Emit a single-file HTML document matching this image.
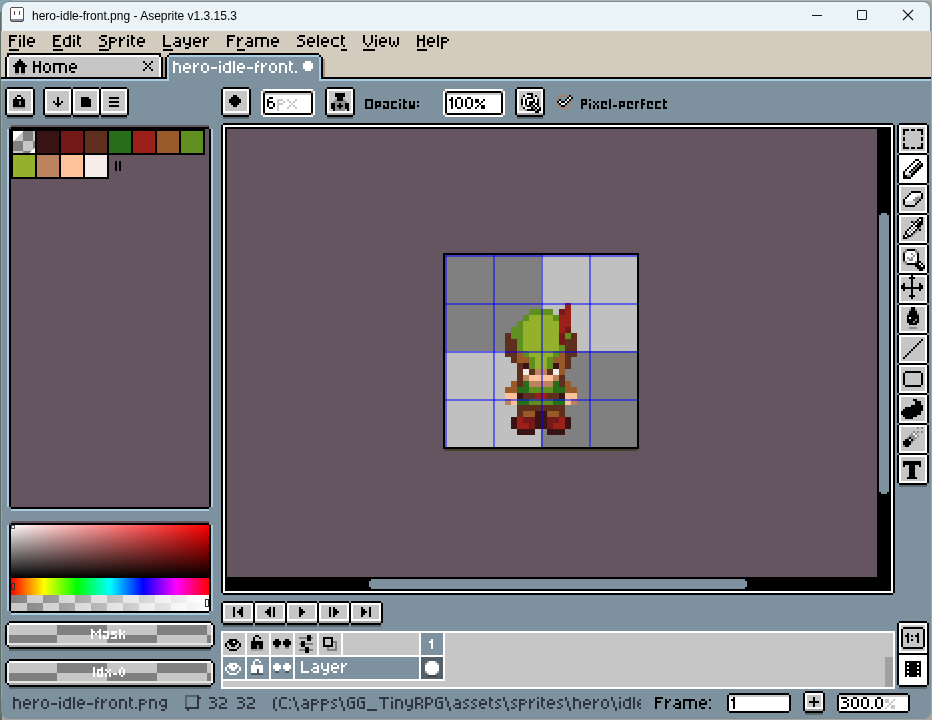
<!DOCTYPE html>
<html><head><meta charset="utf-8"><style>
html,body{margin:0;padding:0;width:932px;height:720px;overflow:hidden;background:#62797f;}
#w{position:relative;width:932px;height:720px;overflow:hidden;}
#w div,#w span,#w svg{position:absolute;display:block;}
#w span{white-space:nowrap;-webkit-font-smoothing:antialiased;will-change:transform;}
</style></head><body><div id="w">
<div style="left:0px;top:0px;width:932px;height:720px;background:#a9a5a2;"></div>
<div style="left:0px;top:0px;width:2px;height:720px;background:#5f6f68;"></div>
<div style="left:0px;top:0px;width:932px;height:1px;background:#a9b2b6;"></div>
<div style="left:0px;top:0px;width:12px;height:12px;background:#86a6b4;"></div>
<div style="left:1px;top:1px;width:930px;height:718px;background:#7b8f99;border-radius:8px;"></div>
<div style="left:2px;top:2px;width:928px;height:716px;background:#7d929e;border-radius:7px;"></div>
<div style="left:1px;top:40px;width:1px;height:660px;background:#8fa3ad;"></div>
<div style="left:2px;top:2px;width:928px;height:29px;background:#eaf3f6;border-radius:7px 7px 0 0;"></div>
<div style="left:11px;top:7px;width:12px;height:15px;background:#5d4a55;"></div>
<div style="left:10px;top:8px;width:14px;height:13px;background:#5d4a55;"></div>
<div style="left:11px;top:8px;width:12px;height:13px;background:#fff;"></div>
<div style="left:11px;top:19px;width:12px;height:2px;background:#7d929e;"></div>
<div style="left:14px;top:11px;width:1px;height:4px;background:#5d4a55;"></div>
<div style="left:19px;top:11px;width:1px;height:4px;background:#5d4a55;"></div>
<span style="left:32px;top:9.84px;font:normal 12px/12px 'Liberation Sans',sans-serif;color:#000;letter-spacing:0.005px;">hero-idle-front.png - Aseprite v1.3.15.3</span>
<div style="left:812px;top:15px;width:10px;height:1px;background:#1a1a1a;"></div>
<div style="left:857px;top:10px;width:10px;height:10px;background:transparent;box-sizing:border-box;border:1px solid #1a1a1a;border-radius:1px;"></div>
<svg style="left:902px;top:9px" width="12" height="12"><path d="M1 1L11 11M11 1L1 11" stroke="#1a1a1a" stroke-width="1.1"/></svg>
<div style="left:1px;top:31px;width:930px;height:50px;background:#d3cbbe;"></div>
<svg style="left:9px;top:35px;" width="28" height="14" viewBox="0 0 28 14" shape-rendering="crispEdges"><path d="M0 0h8v2h-8zM0 2h2v2h-2zM0 4h6v2h-6zM0 6h2v2h-2zM0 8h2v2h-2zM0 10h2v2h-2zM10 0h2v2h-2zM10 4h2v2h-2zM10 6h2v2h-2zM10 8h2v2h-2zM10 10h2v2h-2zM14 0h2v2h-2zM14 2h2v2h-2zM14 4h2v2h-2zM14 6h2v2h-2zM14 8h2v2h-2zM14 10h2v2h-2zM20 2h4v2h-4zM18 4h2v2h-2zM24 4h2v2h-2zM18 6h8v2h-8zM18 8h2v2h-2zM20 10h4v2h-4z" fill="#000"/></svg>
<svg style="left:53px;top:35px;" width="30" height="14" viewBox="0 0 30 14" shape-rendering="crispEdges"><path d="M0 0h8v2h-8zM0 2h2v2h-2zM0 4h6v2h-6zM0 6h2v2h-2zM0 8h2v2h-2zM0 10h8v2h-8zM16 0h2v2h-2zM12 2h6v2h-6zM10 4h2v2h-2zM16 4h2v2h-2zM10 6h2v2h-2zM16 6h2v2h-2zM10 8h2v2h-2zM16 8h2v2h-2zM12 10h6v2h-6zM20 0h2v2h-2zM20 4h2v2h-2zM20 6h2v2h-2zM20 8h2v2h-2zM20 10h2v2h-2zM24 0h2v2h-2zM24 2h4v2h-4zM24 4h2v2h-2zM24 6h2v2h-2zM24 8h2v2h-2zM26 10h2v2h-2z" fill="#000"/></svg>
<svg style="left:99px;top:35px;" width="48" height="14" viewBox="0 0 48 14" shape-rendering="crispEdges"><path d="M2 0h6v2h-6zM0 2h2v2h-2zM2 4h4v2h-4zM6 6h2v2h-2zM6 8h2v2h-2zM0 10h6v2h-6zM10 2h6v2h-6zM10 4h2v2h-2zM16 4h2v2h-2zM10 6h6v2h-6zM10 8h2v2h-2zM10 10h2v2h-2zM10 12h2v2h-2zM20 2h2v2h-2zM24 2h2v2h-2zM20 4h4v2h-4zM20 6h2v2h-2zM20 8h2v2h-2zM20 10h2v2h-2zM28 0h2v2h-2zM28 4h2v2h-2zM28 6h2v2h-2zM28 8h2v2h-2zM28 10h2v2h-2zM32 0h2v2h-2zM32 2h4v2h-4zM32 4h2v2h-2zM32 6h2v2h-2zM32 8h2v2h-2zM34 10h2v2h-2zM40 2h4v2h-4zM38 4h2v2h-2zM44 4h2v2h-2zM38 6h8v2h-8zM38 8h2v2h-2zM40 10h4v2h-4z" fill="#000"/></svg>
<svg style="left:163px;top:35px;" width="48" height="14" viewBox="0 0 48 14" shape-rendering="crispEdges"><path d="M0 0h2v2h-2zM0 2h2v2h-2zM0 4h2v2h-2zM0 6h2v2h-2zM0 8h2v2h-2zM0 10h8v2h-8zM12 2h4v2h-4zM16 4h2v2h-2zM12 6h6v2h-6zM10 8h2v2h-2zM16 8h2v2h-2zM12 10h6v2h-6zM20 2h2v2h-2zM26 2h2v2h-2zM20 4h2v2h-2zM26 4h2v2h-2zM20 6h2v2h-2zM26 6h2v2h-2zM22 8h6v2h-6zM26 10h2v2h-2zM22 12h4v2h-4zM32 2h4v2h-4zM30 4h2v2h-2zM36 4h2v2h-2zM30 6h8v2h-8zM30 8h2v2h-2zM32 10h4v2h-4zM40 2h2v2h-2zM44 2h2v2h-2zM40 4h4v2h-4zM40 6h2v2h-2zM40 8h2v2h-2zM40 10h2v2h-2z" fill="#000"/></svg>
<svg style="left:227px;top:35px;" width="54" height="14" viewBox="0 0 54 14" shape-rendering="crispEdges"><path d="M0 0h8v2h-8zM0 2h2v2h-2zM0 4h6v2h-6zM0 6h2v2h-2zM0 8h2v2h-2zM0 10h2v2h-2zM10 2h2v2h-2zM14 2h2v2h-2zM10 4h4v2h-4zM10 6h2v2h-2zM10 8h2v2h-2zM10 10h2v2h-2zM20 2h4v2h-4zM24 4h2v2h-2zM20 6h6v2h-6zM18 8h2v2h-2zM24 8h2v2h-2zM20 10h6v2h-6zM28 2h12v2h-12zM28 4h2v2h-2zM34 4h2v2h-2zM40 4h2v2h-2zM28 6h2v2h-2zM34 6h2v2h-2zM40 6h2v2h-2zM28 8h2v2h-2zM34 8h2v2h-2zM40 8h2v2h-2zM28 10h2v2h-2zM34 10h2v2h-2zM40 10h2v2h-2zM46 2h4v2h-4zM44 4h2v2h-2zM50 4h2v2h-2zM44 6h8v2h-8zM44 8h2v2h-2zM46 10h4v2h-4z" fill="#000"/></svg>
<svg style="left:297px;top:35px;" width="50" height="14" viewBox="0 0 50 14" shape-rendering="crispEdges"><path d="M2 0h6v2h-6zM0 2h2v2h-2zM2 4h4v2h-4zM6 6h2v2h-2zM6 8h2v2h-2zM0 10h6v2h-6zM12 2h4v2h-4zM10 4h2v2h-2zM16 4h2v2h-2zM10 6h8v2h-8zM10 8h2v2h-2zM12 10h4v2h-4zM20 0h2v2h-2zM20 2h2v2h-2zM20 4h2v2h-2zM20 6h2v2h-2zM20 8h2v2h-2zM20 10h2v2h-2zM26 2h4v2h-4zM24 4h2v2h-2zM30 4h2v2h-2zM24 6h8v2h-8zM24 8h2v2h-2zM26 10h4v2h-4zM36 2h6v2h-6zM34 4h2v2h-2zM34 6h2v2h-2zM34 8h2v2h-2zM36 10h6v2h-6zM44 0h2v2h-2zM44 2h4v2h-4zM44 4h2v2h-2zM44 6h2v2h-2zM44 8h2v2h-2zM46 10h2v2h-2z" fill="#000"/></svg>
<svg style="left:363px;top:35px;" width="38" height="14" viewBox="0 0 38 14" shape-rendering="crispEdges"><path d="M0 0h2v2h-2zM8 0h2v2h-2zM0 2h2v2h-2zM8 2h2v2h-2zM0 4h2v2h-2zM8 4h2v2h-2zM0 6h2v2h-2zM8 6h2v2h-2zM2 8h2v2h-2zM6 8h2v2h-2zM4 10h2v2h-2zM12 0h2v2h-2zM12 4h2v2h-2zM12 6h2v2h-2zM12 8h2v2h-2zM12 10h2v2h-2zM18 2h4v2h-4zM16 4h2v2h-2zM22 4h2v2h-2zM16 6h8v2h-8zM16 8h2v2h-2zM18 10h4v2h-4zM26 2h2v2h-2zM34 2h2v2h-2zM26 4h2v2h-2zM34 4h2v2h-2zM26 6h2v2h-2zM30 6h2v2h-2zM34 6h2v2h-2zM26 8h2v2h-2zM30 8h2v2h-2zM34 8h2v2h-2zM28 10h2v2h-2zM32 10h2v2h-2z" fill="#000"/></svg>
<svg style="left:417px;top:35px;" width="34" height="14" viewBox="0 0 34 14" shape-rendering="crispEdges"><path d="M0 0h2v2h-2zM6 0h2v2h-2zM0 2h2v2h-2zM6 2h2v2h-2zM0 4h8v2h-8zM0 6h2v2h-2zM6 6h2v2h-2zM0 8h2v2h-2zM6 8h2v2h-2zM0 10h2v2h-2zM6 10h2v2h-2zM12 2h4v2h-4zM10 4h2v2h-2zM16 4h2v2h-2zM10 6h8v2h-8zM10 8h2v2h-2zM12 10h4v2h-4zM20 0h2v2h-2zM20 2h2v2h-2zM20 4h2v2h-2zM20 6h2v2h-2zM20 8h2v2h-2zM20 10h2v2h-2zM24 2h6v2h-6zM24 4h2v2h-2zM30 4h2v2h-2zM24 6h6v2h-6zM24 8h2v2h-2zM24 10h2v2h-2zM24 12h2v2h-2z" fill="#000"/></svg>
<div style="left:9px;top:49px;width:10px;height:2px;background:#000;"></div>
<div style="left:53px;top:49px;width:10px;height:2px;background:#000;"></div>
<div style="left:99px;top:49px;width:10px;height:2px;background:#000;"></div>
<div style="left:163px;top:49px;width:10px;height:2px;background:#000;"></div>
<div style="left:237px;top:49px;width:8px;height:2px;background:#000;"></div>
<div style="left:341px;top:49px;width:6px;height:2px;background:#000;"></div>
<div style="left:363px;top:49px;width:12px;height:2px;background:#000;"></div>
<div style="left:417px;top:49px;width:10px;height:2px;background:#000;"></div>
<div style="left:1px;top:77px;width:930px;height:2px;background:#000;"></div>
<div style="left:1px;top:79px;width:930px;height:2px;background:#a9cce2;"></div>
<div style="left:7px;top:53px;width:154px;height:24px;background:#000;"></div>
<div style="left:9px;top:53px;width:152px;height:2px;background:#000;"></div>
<div style="left:5px;top:57px;width:2px;height:20px;background:#000;"></div>
<div style="left:7px;top:55px;width:2px;height:2px;background:#000;"></div>
<div style="left:7px;top:57px;width:154px;height:20px;background:#fff;"></div>
<div style="left:9px;top:55px;width:150px;height:2px;background:#fff;"></div>
<div style="left:9px;top:57px;width:150px;height:20px;background:#c6c6c6;"></div>
<div style="left:161px;top:57px;width:2px;height:20px;background:#000;"></div>
<div style="left:159px;top:55px;width:2px;height:2px;background:#000;"></div>
<div style="left:163px;top:57px;width:2px;height:20px;background:#a89080;"></div>
<div style="left:169px;top:53px;width:150px;height:2px;background:#000;"></div>
<div style="left:167px;top:55px;width:2px;height:2px;background:#000;"></div>
<div style="left:165px;top:57px;width:2px;height:22px;background:#000;"></div>
<div style="left:319px;top:55px;width:2px;height:2px;background:#000;"></div>
<div style="left:321px;top:57px;width:2px;height:22px;background:#000;"></div>
<div style="left:323px;top:59px;width:2px;height:18px;background:#a89080;"></div>
<div style="left:167px;top:57px;width:154px;height:24px;background:#a9cce2;"></div>
<div style="left:169px;top:55px;width:150px;height:2px;background:#a9cce2;"></div>
<div style="left:169px;top:57px;width:150px;height:24px;background:#7d929e;"></div>
<div style="left:321px;top:79px;width:2px;height:2px;background:#a9cce2;"></div>
<svg style="left:33px;top:61px;" width="46" height="14" viewBox="0 0 46 14" shape-rendering="crispEdges"><path d="M0 0h2v2h-2zM6 0h2v2h-2zM0 2h2v2h-2zM6 2h2v2h-2zM0 4h8v2h-8zM0 6h2v2h-2zM6 6h2v2h-2zM0 8h2v2h-2zM6 8h2v2h-2zM0 10h2v2h-2zM6 10h2v2h-2zM12 2h4v2h-4zM10 4h2v2h-2zM16 4h2v2h-2zM10 6h2v2h-2zM16 6h2v2h-2zM10 8h2v2h-2zM16 8h2v2h-2zM12 10h4v2h-4zM20 2h12v2h-12zM20 4h2v2h-2zM26 4h2v2h-2zM32 4h2v2h-2zM20 6h2v2h-2zM26 6h2v2h-2zM32 6h2v2h-2zM20 8h2v2h-2zM26 8h2v2h-2zM32 8h2v2h-2zM20 10h2v2h-2zM26 10h2v2h-2zM32 10h2v2h-2zM38 2h4v2h-4zM36 4h2v2h-2zM42 4h2v2h-2zM36 6h8v2h-8zM36 8h2v2h-2zM38 10h4v2h-4z" fill="#000"/></svg>
<svg style="left:173px;top:61px;" width="126" height="14" viewBox="0 0 126 14" shape-rendering="crispEdges"><path d="M0 0h2v2h-2zM0 2h6v2h-6zM0 4h2v2h-2zM6 4h2v2h-2zM0 6h2v2h-2zM6 6h2v2h-2zM0 8h2v2h-2zM6 8h2v2h-2zM0 10h2v2h-2zM6 10h2v2h-2zM12 2h4v2h-4zM10 4h2v2h-2zM16 4h2v2h-2zM10 6h8v2h-8zM10 8h2v2h-2zM12 10h4v2h-4zM20 2h2v2h-2zM24 2h2v2h-2zM20 4h4v2h-4zM20 6h2v2h-2zM20 8h2v2h-2zM20 10h2v2h-2zM30 2h4v2h-4zM28 4h2v2h-2zM34 4h2v2h-2zM28 6h2v2h-2zM34 6h2v2h-2zM28 8h2v2h-2zM34 8h2v2h-2zM30 10h4v2h-4zM38 6h6v2h-6zM46 0h2v2h-2zM46 4h2v2h-2zM46 6h2v2h-2zM46 8h2v2h-2zM46 10h2v2h-2zM56 0h2v2h-2zM52 2h6v2h-6zM50 4h2v2h-2zM56 4h2v2h-2zM50 6h2v2h-2zM56 6h2v2h-2zM50 8h2v2h-2zM56 8h2v2h-2zM52 10h6v2h-6zM60 0h2v2h-2zM60 2h2v2h-2zM60 4h2v2h-2zM60 6h2v2h-2zM60 8h2v2h-2zM60 10h2v2h-2zM66 2h4v2h-4zM64 4h2v2h-2zM70 4h2v2h-2zM64 6h8v2h-8zM64 8h2v2h-2zM66 10h4v2h-4zM74 6h6v2h-6zM84 0h2v2h-2zM82 2h2v2h-2zM82 4h4v2h-4zM82 6h2v2h-2zM82 8h2v2h-2zM82 10h2v2h-2zM88 2h2v2h-2zM92 2h2v2h-2zM88 4h4v2h-4zM88 6h2v2h-2zM88 8h2v2h-2zM88 10h2v2h-2zM98 2h4v2h-4zM96 4h2v2h-2zM102 4h2v2h-2zM96 6h2v2h-2zM102 6h2v2h-2zM96 8h2v2h-2zM102 8h2v2h-2zM98 10h4v2h-4zM106 2h6v2h-6zM106 4h2v2h-2zM112 4h2v2h-2zM106 6h2v2h-2zM112 6h2v2h-2zM106 8h2v2h-2zM112 8h2v2h-2zM106 10h2v2h-2zM112 10h2v2h-2zM116 0h2v2h-2zM116 2h4v2h-4zM116 4h2v2h-2zM116 6h2v2h-2zM116 8h2v2h-2zM118 10h2v2h-2zM122 10h2v2h-2z" fill="#fff"/></svg>
<div style="left:303px;top:63px;width:10px;height:6px;background:#fff;"></div>
<div style="left:305px;top:61px;width:6px;height:10px;background:#fff;"></div>
<div style="left:7px;top:87px;width:26px;height:30px;background:#000;"></div>
<div style="left:5px;top:89px;width:30px;height:26px;background:#000;"></div>
<div style="left:7px;top:89px;width:26px;height:26px;background:#fff;"></div>
<div style="left:9px;top:91px;width:22px;height:20px;background:#c6c6c6;"></div>
<div style="left:7px;top:113px;width:26px;height:2px;background:#a5a5a5;"></div>
<div style="left:7px;top:117px;width:26px;height:2px;background:#5a6870;"></div>
<div style="left:45px;top:87px;width:26px;height:30px;background:#000;"></div>
<div style="left:43px;top:89px;width:30px;height:26px;background:#000;"></div>
<div style="left:45px;top:89px;width:26px;height:26px;background:#fff;"></div>
<div style="left:47px;top:91px;width:22px;height:20px;background:#c6c6c6;"></div>
<div style="left:45px;top:113px;width:26px;height:2px;background:#a5a5a5;"></div>
<div style="left:45px;top:117px;width:26px;height:2px;background:#5a6870;"></div>
<div style="left:73px;top:87px;width:26px;height:30px;background:#000;"></div>
<div style="left:71px;top:89px;width:30px;height:26px;background:#000;"></div>
<div style="left:73px;top:89px;width:26px;height:26px;background:#fff;"></div>
<div style="left:75px;top:91px;width:22px;height:20px;background:#c6c6c6;"></div>
<div style="left:73px;top:113px;width:26px;height:2px;background:#a5a5a5;"></div>
<div style="left:73px;top:117px;width:26px;height:2px;background:#5a6870;"></div>
<div style="left:101px;top:87px;width:26px;height:30px;background:#000;"></div>
<div style="left:99px;top:89px;width:30px;height:26px;background:#000;"></div>
<div style="left:101px;top:89px;width:26px;height:26px;background:#fff;"></div>
<div style="left:103px;top:91px;width:22px;height:20px;background:#c6c6c6;"></div>
<div style="left:101px;top:113px;width:26px;height:2px;background:#a5a5a5;"></div>
<div style="left:101px;top:117px;width:26px;height:2px;background:#5a6870;"></div>
<div style="left:223px;top:87px;width:26px;height:30px;background:#000;"></div>
<div style="left:221px;top:89px;width:30px;height:26px;background:#000;"></div>
<div style="left:223px;top:89px;width:26px;height:26px;background:#fff;"></div>
<div style="left:225px;top:91px;width:22px;height:20px;background:#c6c6c6;"></div>
<div style="left:223px;top:113px;width:26px;height:2px;background:#a5a5a5;"></div>
<div style="left:223px;top:117px;width:26px;height:2px;background:#5a6870;"></div>
<div style="left:263px;top:89px;width:50px;height:28px;background:#fff;"></div>
<div style="left:261px;top:91px;width:54px;height:24px;background:#fff;"></div>
<div style="left:263px;top:91px;width:50px;height:24px;background:#a08070;"></div>
<div style="left:265px;top:91px;width:46px;height:24px;background:#000;"></div>
<div style="left:263px;top:93px;width:50px;height:20px;background:#000;"></div>
<div style="left:265px;top:93px;width:46px;height:20px;background:#fff;"></div>
<div style="left:265px;top:93px;width:46px;height:2px;background:#c8c8c8;"></div>
<svg style="left:267px;top:97px;" width="10" height="14" viewBox="0 0 10 14" shape-rendering="crispEdges"><path d="M2 0h4v2h-4zM0 2h2v2h-2zM0 4h6v2h-6zM0 6h2v2h-2zM6 6h2v2h-2zM0 8h2v2h-2zM6 8h2v2h-2zM2 10h4v2h-4z" fill="#000"/></svg>
<svg style="left:277px;top:97px;" width="22" height="14" viewBox="0 0 22 14" shape-rendering="crispEdges"><path d="M0 2h6v2h-6zM0 4h2v2h-2zM6 4h2v2h-2zM0 6h6v2h-6zM0 8h2v2h-2zM0 10h2v2h-2zM0 12h2v2h-2zM10 2h2v2h-2zM18 2h2v2h-2zM12 4h2v2h-2zM16 4h2v2h-2zM14 6h2v2h-2zM12 8h2v2h-2zM16 8h2v2h-2zM10 10h2v2h-2zM18 10h2v2h-2z" fill="#c6c6c6"/></svg>
<div style="left:327px;top:87px;width:26px;height:30px;background:#000;"></div>
<div style="left:325px;top:89px;width:30px;height:26px;background:#000;"></div>
<div style="left:327px;top:89px;width:26px;height:26px;background:#fff;"></div>
<div style="left:329px;top:91px;width:22px;height:20px;background:#c6c6c6;"></div>
<div style="left:327px;top:113px;width:26px;height:2px;background:#a5a5a5;"></div>
<div style="left:327px;top:117px;width:26px;height:2px;background:#5a6870;"></div>
<svg style="left:365px;top:99px;" width="56" height="10" viewBox="0 0 56 10" shape-rendering="crispEdges"><path d="M0 0h8v2h-8zM0 2h2v2h-2zM6 2h2v2h-2zM0 4h2v2h-2zM6 4h2v2h-2zM0 6h2v2h-2zM6 6h2v2h-2zM0 8h8v2h-8zM10 2h6v2h-6zM10 4h2v2h-2zM14 4h2v2h-2zM10 6h6v2h-6zM10 8h2v2h-2zM18 2h6v2h-6zM22 4h2v2h-2zM18 6h2v2h-2zM22 6h2v2h-2zM18 8h6v2h-6zM26 2h6v2h-6zM26 4h2v2h-2zM26 6h2v2h-2zM26 8h6v2h-6zM34 0h2v2h-2zM34 4h2v2h-2zM34 6h2v2h-2zM34 8h2v2h-2zM38 0h2v2h-2zM38 2h4v2h-4zM38 4h2v2h-2zM38 6h2v2h-2zM38 8h4v2h-4zM44 2h2v2h-2zM48 2h2v2h-2zM44 4h2v2h-2zM48 4h2v2h-2zM44 6h6v2h-6zM44 8h6v2h-6zM52 2h2v2h-2zM52 6h2v2h-2z" fill="#000"/></svg>
<div style="left:445px;top:89px;width:58px;height:28px;background:#fff;"></div>
<div style="left:443px;top:91px;width:62px;height:24px;background:#fff;"></div>
<div style="left:445px;top:91px;width:58px;height:24px;background:#a08070;"></div>
<div style="left:447px;top:91px;width:54px;height:24px;background:#000;"></div>
<div style="left:445px;top:93px;width:58px;height:20px;background:#000;"></div>
<div style="left:447px;top:93px;width:54px;height:20px;background:#fff;"></div>
<div style="left:447px;top:93px;width:54px;height:2px;background:#c8c8c8;"></div>
<svg style="left:449px;top:97px;" width="38" height="14" viewBox="0 0 38 14" shape-rendering="crispEdges"><path d="M2 0h2v2h-2zM0 2h4v2h-4zM2 4h2v2h-2zM2 6h2v2h-2zM2 8h2v2h-2zM2 10h2v2h-2zM8 0h4v2h-4zM6 2h2v2h-2zM12 2h2v2h-2zM6 4h2v2h-2zM12 4h2v2h-2zM6 6h2v2h-2zM12 6h2v2h-2zM6 8h2v2h-2zM12 8h2v2h-2zM8 10h4v2h-4zM18 0h4v2h-4zM16 2h2v2h-2zM22 2h2v2h-2zM16 4h2v2h-2zM22 4h2v2h-2zM16 6h2v2h-2zM22 6h2v2h-2zM16 8h2v2h-2zM22 8h2v2h-2zM18 10h4v2h-4zM26 2h4v2h-4zM34 2h2v2h-2zM26 4h4v2h-4zM32 4h2v2h-2zM30 6h2v2h-2zM28 8h2v2h-2zM32 8h4v2h-4zM26 10h2v2h-2zM32 10h4v2h-4z" fill="#000"/></svg>
<div style="left:517px;top:87px;width:26px;height:30px;background:#000;"></div>
<div style="left:515px;top:89px;width:30px;height:26px;background:#000;"></div>
<div style="left:517px;top:89px;width:26px;height:26px;background:#fff;"></div>
<div style="left:519px;top:91px;width:22px;height:20px;background:#c6c6c6;"></div>
<div style="left:517px;top:113px;width:26px;height:2px;background:#a5a5a5;"></div>
<div style="left:517px;top:117px;width:26px;height:2px;background:#5a6870;"></div>
<svg style="left:581px;top:99px;" width="88" height="10" viewBox="0 0 88 10" shape-rendering="crispEdges"><path d="M0 0h6v2h-6zM0 2h2v2h-2zM4 2h2v2h-2zM0 4h6v2h-6zM0 6h2v2h-2zM0 8h2v2h-2zM8 0h2v2h-2zM8 4h2v2h-2zM8 6h2v2h-2zM8 8h2v2h-2zM12 2h2v2h-2zM16 2h2v2h-2zM14 4h2v2h-2zM12 6h2v2h-2zM16 6h2v2h-2zM12 8h2v2h-2zM16 8h2v2h-2zM20 2h6v2h-6zM20 4h2v2h-2zM24 4h2v2h-2zM20 6h2v2h-2zM20 8h6v2h-6zM28 0h2v2h-2zM28 2h2v2h-2zM28 4h2v2h-2zM28 6h2v2h-2zM28 8h2v2h-2zM32 6h4v2h-4zM38 2h6v2h-6zM38 4h2v2h-2zM42 4h2v2h-2zM38 6h6v2h-6zM38 8h2v2h-2zM46 2h6v2h-6zM46 4h2v2h-2zM50 4h2v2h-2zM46 6h2v2h-2zM46 8h6v2h-6zM54 2h4v2h-4zM54 4h2v2h-2zM54 6h2v2h-2zM54 8h2v2h-2zM60 0h4v2h-4zM60 2h2v2h-2zM60 4h4v2h-4zM60 6h2v2h-2zM60 8h2v2h-2zM66 2h6v2h-6zM66 4h2v2h-2zM70 4h2v2h-2zM66 6h2v2h-2zM66 8h6v2h-6zM74 2h6v2h-6zM74 4h2v2h-2zM74 6h2v2h-2zM74 8h6v2h-6zM82 0h2v2h-2zM82 2h4v2h-4zM82 4h2v2h-2zM82 6h2v2h-2zM82 8h4v2h-4z" fill="#000"/></svg>
<div style="left:11px;top:125px;width:198px;height:2px;background:#655561;"></div>
<div style="left:9px;top:127px;width:2px;height:2px;background:#655561;"></div>
<div style="left:7px;top:129px;width:2px;height:378px;background:#a9cce2;"></div>
<div style="left:211px;top:129px;width:2px;height:378px;background:#a9cce2;"></div>
<div style="left:11px;top:509px;width:198px;height:2px;background:#a9cce2;"></div>
<div style="left:11px;top:127px;width:198px;height:382px;background:#000;"></div>
<div style="left:9px;top:129px;width:202px;height:378px;background:#000;"></div>
<div style="left:11px;top:129px;width:198px;height:378px;background:#655561;"></div>
<div style="left:11px;top:129px;width:194px;height:26px;background:#000;"></div>
<div style="left:11px;top:155px;width:98px;height:24px;background:#000;"></div>
<div style="left:13px;top:131px;width:22px;height:22px;background:#c6c6c6;"></div>
<div style="left:23px;top:131px;width:10px;height:10px;background:#808080;"></div>
<div style="left:13px;top:141px;width:10px;height:10px;background:#808080;"></div>
<div style="left:33px;top:141px;width:2px;height:10px;background:#808080;"></div>
<div style="left:23px;top:151px;width:10px;height:2px;background:#808080;"></div>
<svg style="left:13px;top:131px" width="22" height="22" shape-rendering="crispEdges"><path d="M0 0H10V1H9V2H8V3H7V4H6V5H5V6H4V7H3V8H2V9H1V10H0Z" fill="#fff"/><path d="M22 17V22H17V21H18V20H19V19H20V18H21V17Z" fill="#fff"/></svg>
<div style="left:37px;top:131px;width:22px;height:22px;background:#3a1414;"></div>
<div style="left:61px;top:131px;width:22px;height:22px;background:#741818;"></div>
<div style="left:85px;top:131px;width:22px;height:22px;background:#5f2f1e;"></div>
<div style="left:109px;top:131px;width:22px;height:22px;background:#276d1a;"></div>
<div style="left:133px;top:131px;width:22px;height:22px;background:#9a2018;"></div>
<div style="left:157px;top:131px;width:22px;height:22px;background:#975a28;"></div>
<div style="left:181px;top:131px;width:22px;height:22px;background:#5e8f1f;"></div>
<div style="left:13px;top:155px;width:22px;height:22px;background:#93b12a;"></div>
<div style="left:37px;top:155px;width:22px;height:22px;background:#bd835e;"></div>
<div style="left:61px;top:155px;width:22px;height:22px;background:#fdc29a;"></div>
<div style="left:85px;top:155px;width:22px;height:22px;background:#f5ecea;"></div>
<div style="left:115px;top:161px;width:2px;height:10px;background:#000;"></div>
<div style="left:119px;top:161px;width:2px;height:10px;background:#000;"></div>
<div style="left:11px;top:521px;width:198px;height:2px;background:#655561;"></div>
<div style="left:7px;top:525px;width:2px;height:86px;background:#a9cce2;"></div>
<div style="left:211px;top:525px;width:2px;height:86px;background:#a9cce2;"></div>
<div style="left:11px;top:613px;width:198px;height:2px;background:#a9cce2;"></div>
<div style="left:11px;top:523px;width:198px;height:90px;background:#000;"></div>
<div style="left:9px;top:525px;width:202px;height:86px;background:#000;"></div>
<div style="left:9px;top:523px;width:2px;height:2px;background:#655561;"></div>
<div style="left:11px;top:525px;width:198px;height:53px;background:#fff;background:linear-gradient(to bottom, rgba(0,0,0,0), #000), linear-gradient(to right, #fff, #f00);"></div>
<div style="left:11px;top:578px;width:198px;height:17px;background:#f00;background:linear-gradient(to right,#f00 0%,#ff0 16.67%,#0f0 33.33%,#0ff 50%,#00f 66.67%,#f0f 83.33%,#f00 100%);"></div>
<div style="left:11px;top:595px;width:198px;height:16px;background:#fff;background:linear-gradient(to right, rgba(255,255,255,0), #fff), repeating-linear-gradient(to right, #808080 0 16px, #c8c8c8 16px 32px);"></div>
<div style="left:11px;top:603px;width:198px;height:8px;background:#fff;background:linear-gradient(to right, rgba(255,255,255,0), #fff), repeating-linear-gradient(to right, #c8c8c8 0 16px, #808080 16px 32px);"></div>
<div style="left:9px;top:621px;width:202px;height:28px;background:#000;"></div>
<div style="left:7px;top:623px;width:206px;height:24px;background:#000;"></div>
<div style="left:5px;top:625px;width:210px;height:20px;background:#000;"></div>
<div style="left:9px;top:649px;width:202px;height:2px;background:#5a6870;"></div>
<div style="left:9px;top:623px;width:202px;height:24px;background:#fff;"></div>
<div style="left:7px;top:625px;width:206px;height:20px;background:#fff;"></div>
<div style="left:9px;top:625px;width:48px;height:10px;background:#c6c6c6;"></div>
<div style="left:9px;top:635px;width:48px;height:8px;background:#808080;"></div>
<div style="left:57px;top:625px;width:50px;height:10px;background:#808080;"></div>
<div style="left:57px;top:635px;width:50px;height:8px;background:#c6c6c6;"></div>
<div style="left:107px;top:625px;width:50px;height:10px;background:#c6c6c6;"></div>
<div style="left:107px;top:635px;width:50px;height:8px;background:#808080;"></div>
<div style="left:157px;top:625px;width:50px;height:10px;background:#808080;"></div>
<div style="left:157px;top:635px;width:50px;height:8px;background:#c6c6c6;"></div>
<div style="left:207px;top:625px;width:4px;height:10px;background:#c6c6c6;"></div>
<div style="left:207px;top:635px;width:4px;height:8px;background:#808080;"></div>
<div style="left:9px;top:643px;width:202px;height:2px;background:#e4e4e4;"></div>
<div style="left:9px;top:645px;width:202px;height:2px;background:#a8a8a8;"></div>
<div style="left:7px;top:625px;width:2px;height:18px;background:#eeeeee;"></div>
<div style="left:211px;top:625px;width:2px;height:18px;background:#eeeeee;"></div>
<svg style="left:91px;top:629px;" width="36" height="10" viewBox="0 0 36 10" shape-rendering="crispEdges"><path d="M0 0h2v2h-2zM8 0h2v2h-2zM0 2h4v2h-4zM6 2h4v2h-4zM0 4h2v2h-2zM4 4h2v2h-2zM8 4h2v2h-2zM0 6h2v2h-2zM8 6h2v2h-2zM0 8h2v2h-2zM8 8h2v2h-2zM12 2h6v2h-6zM16 4h2v2h-2zM12 6h2v2h-2zM16 6h2v2h-2zM12 8h6v2h-6zM20 2h6v2h-6zM20 4h4v2h-4zM24 6h2v2h-2zM20 8h6v2h-6zM28 0h2v2h-2zM28 2h2v2h-2zM32 2h2v2h-2zM28 4h4v2h-4zM28 6h2v2h-2zM32 6h2v2h-2zM28 8h2v2h-2zM32 8h2v2h-2z" fill="#fff"/></svg>
<div style="left:9px;top:659px;width:202px;height:28px;background:#000;"></div>
<div style="left:7px;top:661px;width:206px;height:24px;background:#000;"></div>
<div style="left:5px;top:663px;width:210px;height:20px;background:#000;"></div>
<div style="left:9px;top:687px;width:202px;height:2px;background:#5a6870;"></div>
<div style="left:9px;top:661px;width:202px;height:24px;background:#fff;"></div>
<div style="left:7px;top:663px;width:206px;height:20px;background:#fff;"></div>
<div style="left:9px;top:663px;width:48px;height:10px;background:#c6c6c6;"></div>
<div style="left:9px;top:673px;width:48px;height:8px;background:#808080;"></div>
<div style="left:57px;top:663px;width:50px;height:10px;background:#808080;"></div>
<div style="left:57px;top:673px;width:50px;height:8px;background:#c6c6c6;"></div>
<div style="left:107px;top:663px;width:50px;height:10px;background:#c6c6c6;"></div>
<div style="left:107px;top:673px;width:50px;height:8px;background:#808080;"></div>
<div style="left:157px;top:663px;width:50px;height:10px;background:#808080;"></div>
<div style="left:157px;top:673px;width:50px;height:8px;background:#c6c6c6;"></div>
<div style="left:207px;top:663px;width:4px;height:10px;background:#c6c6c6;"></div>
<div style="left:207px;top:673px;width:4px;height:8px;background:#808080;"></div>
<div style="left:9px;top:681px;width:202px;height:2px;background:#e4e4e4;"></div>
<div style="left:9px;top:683px;width:202px;height:2px;background:#a8a8a8;"></div>
<div style="left:7px;top:663px;width:2px;height:18px;background:#eeeeee;"></div>
<div style="left:211px;top:663px;width:2px;height:18px;background:#eeeeee;"></div>
<svg style="left:93px;top:667px;" width="34" height="10" viewBox="0 0 34 10" shape-rendering="crispEdges"><path d="M0 0h2v2h-2zM0 2h2v2h-2zM0 4h2v2h-2zM0 6h2v2h-2zM0 8h2v2h-2zM8 0h2v2h-2zM4 2h6v2h-6zM4 4h2v2h-2zM8 4h2v2h-2zM4 6h2v2h-2zM8 6h2v2h-2zM4 8h6v2h-6zM12 2h2v2h-2zM16 2h2v2h-2zM14 4h2v2h-2zM12 6h2v2h-2zM16 6h2v2h-2zM12 8h2v2h-2zM16 8h2v2h-2zM20 6h4v2h-4zM28 0h2v2h-2zM26 2h2v2h-2zM30 2h2v2h-2zM26 4h2v2h-2zM30 4h2v2h-2zM26 6h2v2h-2zM30 6h2v2h-2zM28 8h2v2h-2z" fill="#fff"/></svg>
<div style="left:223px;top:123px;width:670px;height:2px;background:#000;"></div>
<div style="left:223px;top:593px;width:670px;height:2px;background:#000;"></div>
<div style="left:221px;top:125px;width:2px;height:468px;background:#000;"></div>
<div style="left:893px;top:125px;width:2px;height:468px;background:#000;"></div>
<div style="left:223px;top:125px;width:670px;height:468px;background:#fff;"></div>
<div style="left:225px;top:127px;width:666px;height:464px;background:#000;"></div>
<div style="left:227px;top:129px;width:650px;height:448px;background:#655561;"></div>
<div style="left:879px;top:215px;width:10px;height:277px;background:#7d929e;"></div>
<div style="left:881px;top:213px;width:6px;height:2px;background:#7d929e;"></div>
<div style="left:881px;top:492px;width:6px;height:2px;background:#7d929e;"></div>
<div style="left:371px;top:579px;width:374px;height:10px;background:#7d929e;"></div>
<div style="left:369px;top:581px;width:2px;height:6px;background:#7d929e;"></div>
<div style="left:745px;top:581px;width:2px;height:6px;background:#7d929e;"></div>
<div style="left:443px;top:253px;width:196px;height:196px;background:#000;"></div>
<div style="left:445px;top:449px;width:192px;height:2px;background:#41412c;"></div>
<div style="left:445px;top:255px;width:192px;height:192px;background:#c0c0c0;"></div>
<div style="left:445px;top:255px;width:96px;height:96px;background:#808080;"></div>
<div style="left:541px;top:351px;width:96px;height:96px;background:#808080;"></div>
<div style="left:565px;top:303px;width:6px;height:6px;background:#9a2018;"></div>
<div style="left:529px;top:309px;width:24px;height:6px;background:#5e8f1f;"></div>
<div style="left:559px;top:309px;width:6px;height:6px;background:#741818;"></div>
<div style="left:565px;top:309px;width:6px;height:6px;background:#9a2018;"></div>
<div style="left:523px;top:315px;width:6px;height:6px;background:#5e8f1f;"></div>
<div style="left:529px;top:315px;width:24px;height:6px;background:#93b12a;"></div>
<div style="left:553px;top:315px;width:6px;height:6px;background:#5e8f1f;"></div>
<div style="left:559px;top:315px;width:12px;height:6px;background:#9a2018;"></div>
<div style="left:517px;top:321px;width:6px;height:6px;background:#5e8f1f;"></div>
<div style="left:523px;top:321px;width:36px;height:6px;background:#93b12a;"></div>
<div style="left:559px;top:321px;width:12px;height:6px;background:#9a2018;"></div>
<div style="left:511px;top:327px;width:12px;height:6px;background:#5e8f1f;"></div>
<div style="left:523px;top:327px;width:36px;height:6px;background:#93b12a;"></div>
<div style="left:559px;top:327px;width:6px;height:6px;background:#9a2018;"></div>
<div style="left:565px;top:327px;width:6px;height:6px;background:#741818;"></div>
<div style="left:505px;top:333px;width:6px;height:6px;background:#5f2f1e;"></div>
<div style="left:511px;top:333px;width:12px;height:6px;background:#5e8f1f;"></div>
<div style="left:523px;top:333px;width:36px;height:6px;background:#93b12a;"></div>
<div style="left:559px;top:333px;width:6px;height:6px;background:#741818;"></div>
<div style="left:565px;top:333px;width:6px;height:6px;background:#5e8f1f;"></div>
<div style="left:571px;top:333px;width:6px;height:6px;background:#5f2f1e;"></div>
<div style="left:505px;top:339px;width:12px;height:6px;background:#5f2f1e;"></div>
<div style="left:517px;top:339px;width:6px;height:6px;background:#5e8f1f;"></div>
<div style="left:523px;top:339px;width:36px;height:6px;background:#93b12a;"></div>
<div style="left:559px;top:339px;width:6px;height:6px;background:#741818;"></div>
<div style="left:565px;top:339px;width:12px;height:6px;background:#5f2f1e;"></div>
<div style="left:505px;top:345px;width:12px;height:6px;background:#5f2f1e;"></div>
<div style="left:517px;top:345px;width:6px;height:6px;background:#5e8f1f;"></div>
<div style="left:523px;top:345px;width:36px;height:6px;background:#93b12a;"></div>
<div style="left:559px;top:345px;width:6px;height:6px;background:#5e8f1f;"></div>
<div style="left:565px;top:345px;width:12px;height:6px;background:#5f2f1e;"></div>
<div style="left:505px;top:351px;width:12px;height:6px;background:#5f2f1e;"></div>
<div style="left:517px;top:351px;width:6px;height:6px;background:#975a28;"></div>
<div style="left:523px;top:351px;width:6px;height:6px;background:#5e8f1f;"></div>
<div style="left:529px;top:351px;width:24px;height:6px;background:#93b12a;"></div>
<div style="left:553px;top:351px;width:6px;height:6px;background:#5e8f1f;"></div>
<div style="left:559px;top:351px;width:6px;height:6px;background:#975a28;"></div>
<div style="left:565px;top:351px;width:12px;height:6px;background:#5f2f1e;"></div>
<div style="left:511px;top:357px;width:6px;height:6px;background:#5f2f1e;"></div>
<div style="left:517px;top:357px;width:12px;height:6px;background:#975a28;"></div>
<div style="left:529px;top:357px;width:6px;height:6px;background:#5e8f1f;"></div>
<div style="left:535px;top:357px;width:12px;height:6px;background:#93b12a;"></div>
<div style="left:547px;top:357px;width:6px;height:6px;background:#5e8f1f;"></div>
<div style="left:553px;top:357px;width:12px;height:6px;background:#975a28;"></div>
<div style="left:565px;top:357px;width:6px;height:6px;background:#5f2f1e;"></div>
<div style="left:517px;top:363px;width:6px;height:6px;background:#5f2f1e;"></div>
<div style="left:523px;top:363px;width:6px;height:6px;background:#3a1414;"></div>
<div style="left:529px;top:363px;width:6px;height:6px;background:#5e8f1f;"></div>
<div style="left:535px;top:363px;width:12px;height:6px;background:#93b12a;"></div>
<div style="left:547px;top:363px;width:6px;height:6px;background:#5e8f1f;"></div>
<div style="left:553px;top:363px;width:6px;height:6px;background:#3a1414;"></div>
<div style="left:559px;top:363px;width:6px;height:6px;background:#975a28;"></div>
<div style="left:565px;top:363px;width:6px;height:6px;background:#5f2f1e;"></div>
<div style="left:517px;top:369px;width:6px;height:6px;background:#5f2f1e;"></div>
<div style="left:523px;top:369px;width:6px;height:6px;background:#f5ecea;"></div>
<div style="left:529px;top:369px;width:6px;height:6px;background:#5f2f1e;"></div>
<div style="left:535px;top:369px;width:12px;height:6px;background:#bd835e;"></div>
<div style="left:547px;top:369px;width:6px;height:6px;background:#5f2f1e;"></div>
<div style="left:553px;top:369px;width:6px;height:6px;background:#f5ecea;"></div>
<div style="left:559px;top:369px;width:6px;height:6px;background:#975a28;"></div>
<div style="left:517px;top:375px;width:6px;height:6px;background:#5f2f1e;"></div>
<div style="left:523px;top:375px;width:6px;height:6px;background:#bd835e;"></div>
<div style="left:529px;top:375px;width:24px;height:6px;background:#fdc29a;"></div>
<div style="left:553px;top:375px;width:6px;height:6px;background:#bd835e;"></div>
<div style="left:559px;top:375px;width:6px;height:6px;background:#5f2f1e;"></div>
<div style="left:511px;top:381px;width:6px;height:6px;background:#975a28;"></div>
<div style="left:517px;top:381px;width:6px;height:6px;background:#5f2f1e;"></div>
<div style="left:523px;top:381px;width:6px;height:6px;background:#276d1a;"></div>
<div style="left:529px;top:381px;width:24px;height:6px;background:#bd835e;"></div>
<div style="left:553px;top:381px;width:6px;height:6px;background:#276d1a;"></div>
<div style="left:559px;top:381px;width:6px;height:6px;background:#5f2f1e;"></div>
<div style="left:565px;top:381px;width:6px;height:6px;background:#975a28;"></div>
<div style="left:505px;top:387px;width:12px;height:6px;background:#975a28;"></div>
<div style="left:517px;top:387px;width:12px;height:6px;background:#276d1a;"></div>
<div style="left:529px;top:387px;width:24px;height:6px;background:#5e8f1f;"></div>
<div style="left:553px;top:387px;width:12px;height:6px;background:#276d1a;"></div>
<div style="left:565px;top:387px;width:12px;height:6px;background:#975a28;"></div>
<div style="left:505px;top:393px;width:12px;height:6px;background:#fdc29a;"></div>
<div style="left:517px;top:393px;width:6px;height:6px;background:#3a1414;"></div>
<div style="left:523px;top:393px;width:12px;height:6px;background:#5f2f1e;"></div>
<div style="left:535px;top:393px;width:12px;height:6px;background:#9a2018;"></div>
<div style="left:547px;top:393px;width:12px;height:6px;background:#5f2f1e;"></div>
<div style="left:559px;top:393px;width:6px;height:6px;background:#3a1414;"></div>
<div style="left:565px;top:393px;width:12px;height:6px;background:#fdc29a;"></div>
<div style="left:505px;top:399px;width:6px;height:6px;background:#bd835e;"></div>
<div style="left:511px;top:399px;width:6px;height:6px;background:#fdc29a;"></div>
<div style="left:517px;top:399px;width:12px;height:6px;background:#276d1a;"></div>
<div style="left:529px;top:399px;width:24px;height:6px;background:#5e8f1f;"></div>
<div style="left:553px;top:399px;width:12px;height:6px;background:#276d1a;"></div>
<div style="left:565px;top:399px;width:6px;height:6px;background:#fdc29a;"></div>
<div style="left:571px;top:399px;width:6px;height:6px;background:#bd835e;"></div>
<div style="left:517px;top:405px;width:48px;height:6px;background:#5f2f1e;"></div>
<div style="left:517px;top:411px;width:6px;height:6px;background:#5f2f1e;"></div>
<div style="left:523px;top:411px;width:12px;height:6px;background:#975a28;"></div>
<div style="left:535px;top:411px;width:12px;height:6px;background:#3a1414;"></div>
<div style="left:547px;top:411px;width:12px;height:6px;background:#975a28;"></div>
<div style="left:559px;top:411px;width:6px;height:6px;background:#5f2f1e;"></div>
<div style="left:511px;top:417px;width:6px;height:6px;background:#3a1414;"></div>
<div style="left:517px;top:417px;width:6px;height:6px;background:#9a2018;"></div>
<div style="left:523px;top:417px;width:12px;height:6px;background:#741818;"></div>
<div style="left:535px;top:417px;width:12px;height:6px;background:#3a1414;"></div>
<div style="left:547px;top:417px;width:12px;height:6px;background:#741818;"></div>
<div style="left:559px;top:417px;width:6px;height:6px;background:#9a2018;"></div>
<div style="left:565px;top:417px;width:6px;height:6px;background:#3a1414;"></div>
<div style="left:511px;top:423px;width:6px;height:6px;background:#3a1414;"></div>
<div style="left:517px;top:423px;width:12px;height:6px;background:#9a2018;"></div>
<div style="left:529px;top:423px;width:6px;height:6px;background:#741818;"></div>
<div style="left:535px;top:423px;width:12px;height:6px;background:#3a1414;"></div>
<div style="left:547px;top:423px;width:6px;height:6px;background:#741818;"></div>
<div style="left:553px;top:423px;width:12px;height:6px;background:#9a2018;"></div>
<div style="left:565px;top:423px;width:6px;height:6px;background:#3a1414;"></div>
<div style="left:517px;top:429px;width:18px;height:6px;background:#3a1414;"></div>
<div style="left:547px;top:429px;width:18px;height:6px;background:#3a1414;"></div>
<div style="left:445px;top:255px;width:2px;height:192px;background:rgba(0,0,255,0.5);"></div>
<div style="left:445px;top:255px;width:192px;height:2px;background:rgba(0,0,255,0.5);"></div>
<div style="left:493px;top:255px;width:2px;height:192px;background:rgba(0,0,255,0.5);"></div>
<div style="left:445px;top:303px;width:192px;height:2px;background:rgba(0,0,255,0.5);"></div>
<div style="left:541px;top:255px;width:2px;height:192px;background:rgba(0,0,255,0.5);"></div>
<div style="left:445px;top:351px;width:192px;height:2px;background:rgba(0,0,255,0.5);"></div>
<div style="left:589px;top:255px;width:2px;height:192px;background:rgba(0,0,255,0.5);"></div>
<div style="left:445px;top:399px;width:192px;height:2px;background:rgba(0,0,255,0.5);"></div>
<div style="left:899px;top:123px;width:28px;height:32px;background:#000;"></div>
<div style="left:897px;top:125px;width:32px;height:28px;background:#000;"></div>
<div style="left:899px;top:125px;width:28px;height:28px;background:#fff;"></div>
<div style="left:901px;top:127px;width:24px;height:24px;background:#c6c6c6;"></div>
<div style="left:899px;top:153px;width:28px;height:32px;background:#000;"></div>
<div style="left:897px;top:155px;width:32px;height:28px;background:#000;"></div>
<div style="left:899px;top:155px;width:28px;height:28px;background:#fff;"></div>
<div style="left:901px;top:157px;width:24px;height:24px;background:#fff;"></div>
<div style="left:899px;top:183px;width:28px;height:32px;background:#000;"></div>
<div style="left:897px;top:185px;width:32px;height:28px;background:#000;"></div>
<div style="left:899px;top:185px;width:28px;height:28px;background:#fff;"></div>
<div style="left:901px;top:187px;width:24px;height:24px;background:#c6c6c6;"></div>
<div style="left:899px;top:213px;width:28px;height:32px;background:#000;"></div>
<div style="left:897px;top:215px;width:32px;height:28px;background:#000;"></div>
<div style="left:899px;top:215px;width:28px;height:28px;background:#fff;"></div>
<div style="left:901px;top:217px;width:24px;height:24px;background:#c6c6c6;"></div>
<div style="left:899px;top:243px;width:28px;height:32px;background:#000;"></div>
<div style="left:897px;top:245px;width:32px;height:28px;background:#000;"></div>
<div style="left:899px;top:245px;width:28px;height:28px;background:#fff;"></div>
<div style="left:901px;top:247px;width:24px;height:24px;background:#c6c6c6;"></div>
<div style="left:899px;top:273px;width:28px;height:32px;background:#000;"></div>
<div style="left:897px;top:275px;width:32px;height:28px;background:#000;"></div>
<div style="left:899px;top:275px;width:28px;height:28px;background:#fff;"></div>
<div style="left:901px;top:277px;width:24px;height:24px;background:#c6c6c6;"></div>
<div style="left:899px;top:303px;width:28px;height:32px;background:#000;"></div>
<div style="left:897px;top:305px;width:32px;height:28px;background:#000;"></div>
<div style="left:899px;top:305px;width:28px;height:28px;background:#fff;"></div>
<div style="left:901px;top:307px;width:24px;height:24px;background:#c6c6c6;"></div>
<div style="left:899px;top:333px;width:28px;height:32px;background:#000;"></div>
<div style="left:897px;top:335px;width:32px;height:28px;background:#000;"></div>
<div style="left:899px;top:335px;width:28px;height:28px;background:#fff;"></div>
<div style="left:901px;top:337px;width:24px;height:24px;background:#c6c6c6;"></div>
<div style="left:899px;top:363px;width:28px;height:32px;background:#000;"></div>
<div style="left:897px;top:365px;width:32px;height:28px;background:#000;"></div>
<div style="left:899px;top:365px;width:28px;height:28px;background:#fff;"></div>
<div style="left:901px;top:367px;width:24px;height:24px;background:#c6c6c6;"></div>
<div style="left:899px;top:393px;width:28px;height:32px;background:#000;"></div>
<div style="left:897px;top:395px;width:32px;height:28px;background:#000;"></div>
<div style="left:899px;top:395px;width:28px;height:28px;background:#fff;"></div>
<div style="left:901px;top:397px;width:24px;height:24px;background:#c6c6c6;"></div>
<div style="left:899px;top:423px;width:28px;height:32px;background:#000;"></div>
<div style="left:897px;top:425px;width:32px;height:28px;background:#000;"></div>
<div style="left:899px;top:425px;width:28px;height:28px;background:#fff;"></div>
<div style="left:901px;top:427px;width:24px;height:24px;background:#c6c6c6;"></div>
<div style="left:899px;top:453px;width:28px;height:32px;background:#000;"></div>
<div style="left:897px;top:455px;width:32px;height:28px;background:#000;"></div>
<div style="left:899px;top:455px;width:28px;height:28px;background:#fff;"></div>
<div style="left:901px;top:457px;width:24px;height:24px;background:#c6c6c6;"></div>
<div style="left:899px;top:485px;width:28px;height:2px;background:#5a6870;"></div>
<div style="left:223px;top:601px;width:30px;height:24px;background:#000;"></div>
<div style="left:221px;top:603px;width:34px;height:20px;background:#000;"></div>
<div style="left:223px;top:603px;width:30px;height:20px;background:#fff;"></div>
<div style="left:225px;top:605px;width:26px;height:14px;background:#c6c6c6;"></div>
<div style="left:223px;top:621px;width:30px;height:2px;background:#a5a5a5;"></div>
<div style="left:223px;top:625px;width:30px;height:2px;background:#5a6870;"></div>
<div style="left:255px;top:601px;width:30px;height:24px;background:#000;"></div>
<div style="left:253px;top:603px;width:34px;height:20px;background:#000;"></div>
<div style="left:255px;top:603px;width:30px;height:20px;background:#fff;"></div>
<div style="left:257px;top:605px;width:26px;height:14px;background:#c6c6c6;"></div>
<div style="left:255px;top:621px;width:30px;height:2px;background:#a5a5a5;"></div>
<div style="left:255px;top:625px;width:30px;height:2px;background:#5a6870;"></div>
<div style="left:287px;top:601px;width:30px;height:24px;background:#000;"></div>
<div style="left:285px;top:603px;width:34px;height:20px;background:#000;"></div>
<div style="left:287px;top:603px;width:30px;height:20px;background:#fff;"></div>
<div style="left:289px;top:605px;width:26px;height:14px;background:#c6c6c6;"></div>
<div style="left:287px;top:621px;width:30px;height:2px;background:#a5a5a5;"></div>
<div style="left:287px;top:625px;width:30px;height:2px;background:#5a6870;"></div>
<div style="left:319px;top:601px;width:30px;height:24px;background:#000;"></div>
<div style="left:317px;top:603px;width:34px;height:20px;background:#000;"></div>
<div style="left:319px;top:603px;width:30px;height:20px;background:#fff;"></div>
<div style="left:321px;top:605px;width:26px;height:14px;background:#c6c6c6;"></div>
<div style="left:319px;top:621px;width:30px;height:2px;background:#a5a5a5;"></div>
<div style="left:319px;top:625px;width:30px;height:2px;background:#5a6870;"></div>
<div style="left:351px;top:601px;width:30px;height:24px;background:#000;"></div>
<div style="left:349px;top:603px;width:34px;height:20px;background:#000;"></div>
<div style="left:351px;top:603px;width:30px;height:20px;background:#fff;"></div>
<div style="left:353px;top:605px;width:26px;height:14px;background:#c6c6c6;"></div>
<div style="left:351px;top:621px;width:30px;height:2px;background:#a5a5a5;"></div>
<div style="left:351px;top:625px;width:30px;height:2px;background:#5a6870;"></div>
<div style="left:221px;top:631px;width:674px;height:58px;background:#fff;"></div>
<div style="left:223px;top:633px;width:670px;height:54px;background:#c6c6c6;"></div>
<div style="left:245px;top:633px;width:2px;height:22px;background:#fff;"></div>
<div style="left:269px;top:633px;width:2px;height:22px;background:#fff;"></div>
<div style="left:293px;top:633px;width:2px;height:22px;background:#fff;"></div>
<div style="left:317px;top:633px;width:2px;height:22px;background:#fff;"></div>
<div style="left:341px;top:633px;width:2px;height:22px;background:#fff;"></div>
<div style="left:419px;top:633px;width:2px;height:22px;background:#fff;"></div>
<div style="left:443px;top:633px;width:2px;height:22px;background:#fff;"></div>
<div style="left:223px;top:655px;width:222px;height:2px;background:#fff;"></div>
<div style="left:223px;top:657px;width:196px;height:22px;background:#7d929e;"></div>
<div style="left:245px;top:657px;width:2px;height:22px;background:#fff;"></div>
<div style="left:269px;top:657px;width:2px;height:22px;background:#fff;"></div>
<div style="left:293px;top:657px;width:2px;height:22px;background:#fff;"></div>
<div style="left:419px;top:657px;width:2px;height:22px;background:#fff;"></div>
<div style="left:421px;top:633px;width:22px;height:22px;background:#7d929e;"></div>
<div style="left:421px;top:657px;width:22px;height:22px;background:#536069;"></div>
<div style="left:443px;top:657px;width:2px;height:22px;background:#fff;"></div>
<div style="left:223px;top:679px;width:222px;height:2px;background:#fff;"></div>
<div style="left:885px;top:657px;width:8px;height:30px;background:#a0a0a0;"></div>
<svg style="left:301px;top:661px;" width="48" height="14" viewBox="0 0 48 14" shape-rendering="crispEdges"><path d="M0 0h2v2h-2zM0 2h2v2h-2zM0 4h2v2h-2zM0 6h2v2h-2zM0 8h2v2h-2zM0 10h8v2h-8zM12 2h4v2h-4zM16 4h2v2h-2zM12 6h6v2h-6zM10 8h2v2h-2zM16 8h2v2h-2zM12 10h6v2h-6zM20 2h2v2h-2zM26 2h2v2h-2zM20 4h2v2h-2zM26 4h2v2h-2zM20 6h2v2h-2zM26 6h2v2h-2zM22 8h6v2h-6zM26 10h2v2h-2zM22 12h4v2h-4zM32 2h4v2h-4zM30 4h2v2h-2zM36 4h2v2h-2zM30 6h8v2h-8zM30 8h2v2h-2zM32 10h4v2h-4zM40 2h2v2h-2zM44 2h2v2h-2zM40 4h4v2h-4zM40 6h2v2h-2zM40 8h2v2h-2zM40 10h2v2h-2z" fill="#fff"/></svg>
<svg style="left:429px;top:639px;" width="6" height="10" viewBox="0 0 6 10" shape-rendering="crispEdges"><path d="M2 0h2v2h-2zM0 2h4v2h-4zM2 4h2v2h-2zM2 6h2v2h-2zM2 8h2v2h-2z" fill="#fff"/></svg>
<div style="left:427px;top:661px;width:2px;height:2px;background:#a9b0b5;"></div>
<div style="left:429px;top:661px;width:6px;height:2px;background:#fff;"></div>
<div style="left:435px;top:661px;width:2px;height:2px;background:#a9b0b5;"></div>
<div style="left:425px;top:663px;width:2px;height:2px;background:#a9b0b5;"></div>
<div style="left:427px;top:663px;width:10px;height:2px;background:#fff;"></div>
<div style="left:437px;top:663px;width:2px;height:2px;background:#a9b0b5;"></div>
<div style="left:425px;top:665px;width:14px;height:2px;background:#fff;"></div>
<div style="left:425px;top:667px;width:14px;height:2px;background:#fff;"></div>
<div style="left:425px;top:669px;width:14px;height:2px;background:#fff;"></div>
<div style="left:425px;top:671px;width:2px;height:2px;background:#a9b0b5;"></div>
<div style="left:427px;top:671px;width:10px;height:2px;background:#fff;"></div>
<div style="left:437px;top:671px;width:2px;height:2px;background:#a9b0b5;"></div>
<div style="left:427px;top:673px;width:2px;height:2px;background:#a9b0b5;"></div>
<div style="left:429px;top:673px;width:6px;height:2px;background:#fff;"></div>
<div style="left:435px;top:673px;width:2px;height:2px;background:#a9b0b5;"></div>
<div style="left:427px;top:675px;width:10px;height:2px;background:#3a454c;"></div>
<div style="left:899px;top:621px;width:28px;height:66px;background:#000;"></div>
<div style="left:897px;top:623px;width:32px;height:62px;background:#000;"></div>
<div style="left:899px;top:623px;width:28px;height:30px;background:#fff;"></div>
<div style="left:901px;top:625px;width:24px;height:26px;background:#c6c6c6;"></div>
<div style="left:899px;top:655px;width:28px;height:30px;background:#fff;"></div>
<div style="left:899px;top:687px;width:28px;height:2px;background:#5a6870;"></div>
<svg style="left:13px;top:697px;" width="156" height="14" viewBox="0 0 156 14" shape-rendering="crispEdges"><path d="M0 0h2v2h-2zM0 2h6v2h-6zM0 4h2v2h-2zM6 4h2v2h-2zM0 6h2v2h-2zM6 6h2v2h-2zM0 8h2v2h-2zM6 8h2v2h-2zM0 10h2v2h-2zM6 10h2v2h-2zM12 2h4v2h-4zM10 4h2v2h-2zM16 4h2v2h-2zM10 6h8v2h-8zM10 8h2v2h-2zM12 10h4v2h-4zM20 2h2v2h-2zM24 2h2v2h-2zM20 4h4v2h-4zM20 6h2v2h-2zM20 8h2v2h-2zM20 10h2v2h-2zM30 2h4v2h-4zM28 4h2v2h-2zM34 4h2v2h-2zM28 6h2v2h-2zM34 6h2v2h-2zM28 8h2v2h-2zM34 8h2v2h-2zM30 10h4v2h-4zM38 6h6v2h-6zM46 0h2v2h-2zM46 4h2v2h-2zM46 6h2v2h-2zM46 8h2v2h-2zM46 10h2v2h-2zM56 0h2v2h-2zM52 2h6v2h-6zM50 4h2v2h-2zM56 4h2v2h-2zM50 6h2v2h-2zM56 6h2v2h-2zM50 8h2v2h-2zM56 8h2v2h-2zM52 10h6v2h-6zM60 0h2v2h-2zM60 2h2v2h-2zM60 4h2v2h-2zM60 6h2v2h-2zM60 8h2v2h-2zM60 10h2v2h-2zM66 2h4v2h-4zM64 4h2v2h-2zM70 4h2v2h-2zM64 6h8v2h-8zM64 8h2v2h-2zM66 10h4v2h-4zM74 6h6v2h-6zM84 0h2v2h-2zM82 2h2v2h-2zM82 4h4v2h-4zM82 6h2v2h-2zM82 8h2v2h-2zM82 10h2v2h-2zM88 2h2v2h-2zM92 2h2v2h-2zM88 4h4v2h-4zM88 6h2v2h-2zM88 8h2v2h-2zM88 10h2v2h-2zM98 2h4v2h-4zM96 4h2v2h-2zM102 4h2v2h-2zM96 6h2v2h-2zM102 6h2v2h-2zM96 8h2v2h-2zM102 8h2v2h-2zM98 10h4v2h-4zM106 2h6v2h-6zM106 4h2v2h-2zM112 4h2v2h-2zM106 6h2v2h-2zM112 6h2v2h-2zM106 8h2v2h-2zM112 8h2v2h-2zM106 10h2v2h-2zM112 10h2v2h-2zM116 0h2v2h-2zM116 2h4v2h-4zM116 4h2v2h-2zM116 6h2v2h-2zM116 8h2v2h-2zM118 10h2v2h-2zM122 10h2v2h-2zM126 2h6v2h-6zM126 4h2v2h-2zM132 4h2v2h-2zM126 6h6v2h-6zM126 8h2v2h-2zM126 10h2v2h-2zM126 12h2v2h-2zM136 2h6v2h-6zM136 4h2v2h-2zM142 4h2v2h-2zM136 6h2v2h-2zM142 6h2v2h-2zM136 8h2v2h-2zM142 8h2v2h-2zM136 10h2v2h-2zM142 10h2v2h-2zM148 2h6v2h-6zM146 4h2v2h-2zM152 4h2v2h-2zM146 6h2v2h-2zM152 6h2v2h-2zM148 8h6v2h-6zM152 10h2v2h-2zM148 12h4v2h-4z" fill="#2e3440"/></svg>
<div style="left:185px;top:695px;width:14px;height:2px;background:#56646c;"></div>
<div style="left:185px;top:697px;width:2px;height:12px;background:#56646c;"></div>
<div style="left:197px;top:695px;width:2px;height:14px;background:#2e3440;"></div>
<div style="left:185px;top:707px;width:14px;height:2px;background:#2e3440;"></div>
<div style="left:197px;top:697px;width:4px;height:2px;background:#2e3440;"></div>
<div style="left:187px;top:709px;width:2px;height:2px;background:#2e3440;"></div>
<svg style="left:209px;top:697px;" width="48" height="14" viewBox="0 0 48 14" shape-rendering="crispEdges"><path d="M0 0h6v2h-6zM6 2h2v2h-2zM2 4h4v2h-4zM6 6h2v2h-2zM6 8h2v2h-2zM0 10h6v2h-6zM10 0h6v2h-6zM16 2h2v2h-2zM16 4h2v2h-2zM12 6h4v2h-4zM10 8h2v2h-2zM10 10h8v2h-8zM28 0h6v2h-6zM34 2h2v2h-2zM30 4h4v2h-4zM34 6h2v2h-2zM34 8h2v2h-2zM28 10h6v2h-6zM38 0h6v2h-6zM44 2h2v2h-2zM44 4h2v2h-2zM40 6h4v2h-4zM38 8h2v2h-2zM38 10h8v2h-8z" fill="#2e3440"/></svg>
<div style="left:273px;top:697px;width:368px;height:14px;overflow:hidden;">
<svg style="left:0px;top:0px;" width="374" height="14" viewBox="0 0 374 14" shape-rendering="crispEdges"><path d="M2 0h2v2h-2zM0 2h2v2h-2zM0 4h2v2h-2zM0 6h2v2h-2zM0 8h2v2h-2zM0 10h2v2h-2zM2 12h2v2h-2zM8 0h6v2h-6zM6 2h2v2h-2zM6 4h2v2h-2zM6 6h2v2h-2zM6 8h2v2h-2zM8 10h6v2h-6zM16 2h2v2h-2zM16 10h2v2h-2zM20 0h2v2h-2zM20 2h2v2h-2zM22 4h2v2h-2zM22 6h2v2h-2zM22 8h2v2h-2zM24 10h2v2h-2zM24 12h2v2h-2zM30 2h4v2h-4zM34 4h2v2h-2zM30 6h6v2h-6zM28 8h2v2h-2zM34 8h2v2h-2zM30 10h6v2h-6zM38 2h6v2h-6zM38 4h2v2h-2zM44 4h2v2h-2zM38 6h6v2h-6zM38 8h2v2h-2zM38 10h2v2h-2zM38 12h2v2h-2zM48 2h6v2h-6zM48 4h2v2h-2zM54 4h2v2h-2zM48 6h6v2h-6zM48 8h2v2h-2zM48 10h2v2h-2zM48 12h2v2h-2zM60 2h4v2h-4zM58 4h2v2h-2zM60 6h2v2h-2zM62 8h2v2h-2zM58 10h4v2h-4zM66 0h2v2h-2zM66 2h2v2h-2zM68 4h2v2h-2zM68 6h2v2h-2zM68 8h2v2h-2zM70 10h2v2h-2zM70 12h2v2h-2zM76 0h6v2h-6zM74 2h2v2h-2zM74 4h2v2h-2zM78 4h4v2h-4zM74 6h2v2h-2zM80 6h2v2h-2zM74 8h2v2h-2zM80 8h2v2h-2zM76 10h6v2h-6zM86 0h6v2h-6zM84 2h2v2h-2zM84 4h2v2h-2zM88 4h4v2h-4zM84 6h2v2h-2zM90 6h2v2h-2zM84 8h2v2h-2zM90 8h2v2h-2zM86 10h6v2h-6zM94 12h10v2h-10zM106 0h10v2h-10zM110 2h2v2h-2zM110 4h2v2h-2zM110 6h2v2h-2zM110 8h2v2h-2zM110 10h2v2h-2zM118 0h2v2h-2zM118 4h2v2h-2zM118 6h2v2h-2zM118 8h2v2h-2zM118 10h2v2h-2zM122 2h6v2h-6zM122 4h2v2h-2zM128 4h2v2h-2zM122 6h2v2h-2zM128 6h2v2h-2zM122 8h2v2h-2zM128 8h2v2h-2zM122 10h2v2h-2zM128 10h2v2h-2zM132 2h2v2h-2zM138 2h2v2h-2zM132 4h2v2h-2zM138 4h2v2h-2zM132 6h2v2h-2zM138 6h2v2h-2zM134 8h6v2h-6zM138 10h2v2h-2zM134 12h4v2h-4zM142 0h6v2h-6zM142 2h2v2h-2zM148 2h2v2h-2zM142 4h2v2h-2zM148 4h2v2h-2zM142 6h6v2h-6zM142 8h2v2h-2zM148 8h2v2h-2zM142 10h2v2h-2zM148 10h2v2h-2zM152 0h6v2h-6zM152 2h2v2h-2zM158 2h2v2h-2zM152 4h2v2h-2zM158 4h2v2h-2zM152 6h6v2h-6zM152 8h2v2h-2zM152 10h2v2h-2zM164 0h6v2h-6zM162 2h2v2h-2zM162 4h2v2h-2zM166 4h4v2h-4zM162 6h2v2h-2zM168 6h2v2h-2zM162 8h2v2h-2zM168 8h2v2h-2zM164 10h6v2h-6zM172 0h2v2h-2zM172 2h2v2h-2zM174 4h2v2h-2zM174 6h2v2h-2zM174 8h2v2h-2zM176 10h2v2h-2zM176 12h2v2h-2zM182 2h4v2h-4zM186 4h2v2h-2zM182 6h6v2h-6zM180 8h2v2h-2zM186 8h2v2h-2zM182 10h6v2h-6zM192 2h4v2h-4zM190 4h2v2h-2zM192 6h2v2h-2zM194 8h2v2h-2zM190 10h4v2h-4zM200 2h4v2h-4zM198 4h2v2h-2zM200 6h2v2h-2zM202 8h2v2h-2zM198 10h4v2h-4zM208 2h4v2h-4zM206 4h2v2h-2zM212 4h2v2h-2zM206 6h8v2h-8zM206 8h2v2h-2zM208 10h4v2h-4zM216 0h2v2h-2zM216 2h4v2h-4zM216 4h2v2h-2zM216 6h2v2h-2zM216 8h2v2h-2zM218 10h2v2h-2zM224 2h4v2h-4zM222 4h2v2h-2zM224 6h2v2h-2zM226 8h2v2h-2zM222 10h4v2h-4zM230 0h2v2h-2zM230 2h2v2h-2zM232 4h2v2h-2zM232 6h2v2h-2zM232 8h2v2h-2zM234 10h2v2h-2zM234 12h2v2h-2zM240 2h4v2h-4zM238 4h2v2h-2zM240 6h2v2h-2zM242 8h2v2h-2zM238 10h4v2h-4zM246 2h6v2h-6zM246 4h2v2h-2zM252 4h2v2h-2zM246 6h6v2h-6zM246 8h2v2h-2zM246 10h2v2h-2zM246 12h2v2h-2zM256 2h2v2h-2zM260 2h2v2h-2zM256 4h4v2h-4zM256 6h2v2h-2zM256 8h2v2h-2zM256 10h2v2h-2zM264 0h2v2h-2zM264 4h2v2h-2zM264 6h2v2h-2zM264 8h2v2h-2zM264 10h2v2h-2zM268 0h2v2h-2zM268 2h4v2h-4zM268 4h2v2h-2zM268 6h2v2h-2zM268 8h2v2h-2zM270 10h2v2h-2zM276 2h4v2h-4zM274 4h2v2h-2zM280 4h2v2h-2zM274 6h8v2h-8zM274 8h2v2h-2zM276 10h4v2h-4zM286 2h4v2h-4zM284 4h2v2h-2zM286 6h2v2h-2zM288 8h2v2h-2zM284 10h4v2h-4zM292 0h2v2h-2zM292 2h2v2h-2zM294 4h2v2h-2zM294 6h2v2h-2zM294 8h2v2h-2zM296 10h2v2h-2zM296 12h2v2h-2zM300 0h2v2h-2zM300 2h6v2h-6zM300 4h2v2h-2zM306 4h2v2h-2zM300 6h2v2h-2zM306 6h2v2h-2zM300 8h2v2h-2zM306 8h2v2h-2zM300 10h2v2h-2zM306 10h2v2h-2zM312 2h4v2h-4zM310 4h2v2h-2zM316 4h2v2h-2zM310 6h8v2h-8zM310 8h2v2h-2zM312 10h4v2h-4zM320 2h2v2h-2zM324 2h2v2h-2zM320 4h4v2h-4zM320 6h2v2h-2zM320 8h2v2h-2zM320 10h2v2h-2zM330 2h4v2h-4zM328 4h2v2h-2zM334 4h2v2h-2zM328 6h2v2h-2zM334 6h2v2h-2zM328 8h2v2h-2zM334 8h2v2h-2zM330 10h4v2h-4zM338 0h2v2h-2zM338 2h2v2h-2zM340 4h2v2h-2zM340 6h2v2h-2zM340 8h2v2h-2zM342 10h2v2h-2zM342 12h2v2h-2zM346 0h2v2h-2zM346 4h2v2h-2zM346 6h2v2h-2zM346 8h2v2h-2zM346 10h2v2h-2zM356 0h2v2h-2zM352 2h6v2h-6zM350 4h2v2h-2zM356 4h2v2h-2zM350 6h2v2h-2zM356 6h2v2h-2zM350 8h2v2h-2zM356 8h2v2h-2zM352 10h6v2h-6zM360 0h2v2h-2zM360 2h2v2h-2zM360 4h2v2h-2zM360 6h2v2h-2zM360 8h2v2h-2zM360 10h2v2h-2zM366 2h4v2h-4zM364 4h2v2h-2zM370 4h2v2h-2zM364 6h8v2h-8zM364 8h2v2h-2zM366 10h4v2h-4z" fill="#2e3440"/></svg>
</div>
<svg style="left:655px;top:697px;" width="58" height="14" viewBox="0 0 58 14" shape-rendering="crispEdges"><path d="M0 0h8v2h-8zM0 2h2v2h-2zM0 4h6v2h-6zM0 6h2v2h-2zM0 8h2v2h-2zM0 10h2v2h-2zM10 2h2v2h-2zM14 2h2v2h-2zM10 4h4v2h-4zM10 6h2v2h-2zM10 8h2v2h-2zM10 10h2v2h-2zM20 2h4v2h-4zM24 4h2v2h-2zM20 6h6v2h-6zM18 8h2v2h-2zM24 8h2v2h-2zM20 10h6v2h-6zM28 2h12v2h-12zM28 4h2v2h-2zM34 4h2v2h-2zM40 4h2v2h-2zM28 6h2v2h-2zM34 6h2v2h-2zM40 6h2v2h-2zM28 8h2v2h-2zM34 8h2v2h-2zM40 8h2v2h-2zM28 10h2v2h-2zM34 10h2v2h-2zM40 10h2v2h-2zM46 2h4v2h-4zM44 4h2v2h-2zM50 4h2v2h-2zM44 6h8v2h-8zM44 8h2v2h-2zM46 10h4v2h-4zM54 2h2v2h-2zM54 10h2v2h-2z" fill="#000"/></svg>
<div style="left:729px;top:693px;width:60px;height:20px;background:#000;"></div>
<div style="left:727px;top:695px;width:64px;height:16px;background:#000;"></div>
<div style="left:729px;top:695px;width:60px;height:16px;background:#fff;"></div>
<div style="left:729px;top:695px;width:60px;height:2px;background:#c8c8c8;"></div>
<svg style="left:731px;top:697px;" width="6" height="14" viewBox="0 0 6 14" shape-rendering="crispEdges"><path d="M2 0h2v2h-2zM0 2h4v2h-4zM2 4h2v2h-2zM2 6h2v2h-2zM2 8h2v2h-2zM2 10h2v2h-2z" fill="#000"/></svg>
<div style="left:805px;top:691px;width:18px;height:22px;background:#000;"></div>
<div style="left:803px;top:693px;width:22px;height:18px;background:#000;"></div>
<div style="left:805px;top:693px;width:18px;height:18px;background:#fff;"></div>
<div style="left:807px;top:695px;width:14px;height:12px;background:#c6c6c6;"></div>
<div style="left:805px;top:709px;width:18px;height:2px;background:#a5a5a5;"></div>
<div style="left:805px;top:713px;width:18px;height:2px;background:#5a6870;"></div>
<div style="left:809px;top:701px;width:10px;height:2px;background:#000;"></div>
<div style="left:813px;top:697px;width:2px;height:10px;background:#000;"></div>
<div style="left:839px;top:693px;width:69px;height:20px;background:#000;"></div>
<div style="left:837px;top:695px;width:73px;height:16px;background:#000;"></div>
<div style="left:839px;top:695px;width:69px;height:16px;background:#fff;"></div>
<div style="left:839px;top:695px;width:69px;height:2px;background:#c8c8c8;"></div>
<svg style="left:841px;top:697px;" width="44" height="14" viewBox="0 0 44 14" shape-rendering="crispEdges"><path d="M0 0h6v2h-6zM6 2h2v2h-2zM2 4h4v2h-4zM6 6h2v2h-2zM6 8h2v2h-2zM0 10h6v2h-6zM12 0h4v2h-4zM10 2h2v2h-2zM16 2h2v2h-2zM10 4h2v2h-2zM16 4h2v2h-2zM10 6h2v2h-2zM16 6h2v2h-2zM10 8h2v2h-2zM16 8h2v2h-2zM12 10h4v2h-4zM22 0h4v2h-4zM20 2h2v2h-2zM26 2h2v2h-2zM20 4h2v2h-2zM26 4h2v2h-2zM20 6h2v2h-2zM26 6h2v2h-2zM20 8h2v2h-2zM26 8h2v2h-2zM22 10h4v2h-4zM30 10h2v2h-2zM36 0h4v2h-4zM34 2h2v2h-2zM40 2h2v2h-2zM34 4h2v2h-2zM40 4h2v2h-2zM34 6h2v2h-2zM40 6h2v2h-2zM34 8h2v2h-2zM40 8h2v2h-2zM36 10h4v2h-4z" fill="#000"/></svg>
<svg style="left:885px;top:697px;" width="12" height="14" viewBox="0 0 12 14" shape-rendering="crispEdges"><path d="M0 2h4v2h-4zM8 2h2v2h-2zM0 4h4v2h-4zM6 4h2v2h-2zM4 6h2v2h-2zM2 8h2v2h-2zM6 8h4v2h-4zM0 10h2v2h-2zM6 10h4v2h-4z" fill="#c6c6c6"/></svg>
<div style="left:17px;top:95px;width:4px;height:2px;background:#000;"></div>
<div style="left:15px;top:97px;width:2px;height:2px;background:#000;"></div>
<div style="left:17px;top:97px;width:4px;height:2px;background:#fff;"></div>
<div style="left:21px;top:97px;width:2px;height:2px;background:#000;"></div>
<div style="left:13px;top:99px;width:12px;height:2px;background:#000;"></div>
<div style="left:13px;top:101px;width:6px;height:2px;background:#000;"></div>
<div style="left:19px;top:101px;width:2px;height:2px;background:#8c8c8c;"></div>
<div style="left:21px;top:101px;width:4px;height:2px;background:#000;"></div>
<div style="left:13px;top:103px;width:6px;height:2px;background:#000;"></div>
<div style="left:19px;top:103px;width:2px;height:2px;background:#8c8c8c;"></div>
<div style="left:21px;top:103px;width:4px;height:2px;background:#000;"></div>
<div style="left:13px;top:105px;width:12px;height:2px;background:#000;"></div>
<div style="left:13px;top:107px;width:12px;height:2px;background:#a0a0a0;"></div>
<div style="left:57px;top:97px;width:2px;height:2px;background:#000;"></div>
<div style="left:57px;top:99px;width:2px;height:2px;background:#000;"></div>
<div style="left:53px;top:101px;width:2px;height:2px;background:#000;"></div>
<div style="left:57px;top:101px;width:2px;height:2px;background:#000;"></div>
<div style="left:61px;top:101px;width:2px;height:2px;background:#000;"></div>
<div style="left:55px;top:103px;width:6px;height:2px;background:#000;"></div>
<div style="left:57px;top:105px;width:2px;height:2px;background:#000;"></div>
<div style="left:81px;top:97px;width:8px;height:2px;background:#000;"></div>
<div style="left:81px;top:99px;width:10px;height:2px;background:#000;"></div>
<div style="left:81px;top:101px;width:10px;height:2px;background:#000;"></div>
<div style="left:81px;top:103px;width:10px;height:2px;background:#000;"></div>
<div style="left:81px;top:105px;width:10px;height:2px;background:#000;"></div>
<div style="left:109px;top:97px;width:10px;height:2px;background:#000;"></div>
<div style="left:109px;top:101px;width:10px;height:2px;background:#000;"></div>
<div style="left:109px;top:105px;width:10px;height:2px;background:#000;"></div>
<div style="left:233px;top:95px;width:4px;height:2px;background:#000;"></div>
<div style="left:231px;top:97px;width:8px;height:2px;background:#000;"></div>
<div style="left:229px;top:99px;width:12px;height:2px;background:#000;"></div>
<div style="left:229px;top:101px;width:12px;height:2px;background:#000;"></div>
<div style="left:231px;top:103px;width:8px;height:2px;background:#000;"></div>
<div style="left:233px;top:105px;width:4px;height:2px;background:#000;"></div>
<div style="left:335px;top:93px;width:10px;height:2px;background:#000;"></div>
<div style="left:335px;top:95px;width:10px;height:2px;background:#000;"></div>
<div style="left:337px;top:97px;width:6px;height:2px;background:#000;"></div>
<div style="left:335px;top:99px;width:2px;height:2px;background:#8c8c8c;"></div>
<div style="left:337px;top:99px;width:6px;height:2px;background:#000;"></div>
<div style="left:343px;top:99px;width:2px;height:2px;background:#8c8c8c;"></div>
<div style="left:333px;top:101px;width:14px;height:2px;background:#8c8c8c;"></div>
<div style="left:331px;top:103px;width:4px;height:2px;background:#000;"></div>
<div style="left:335px;top:103px;width:4px;height:2px;background:#8c8c8c;"></div>
<div style="left:339px;top:103px;width:2px;height:2px;background:#000;"></div>
<div style="left:341px;top:103px;width:4px;height:2px;background:#8c8c8c;"></div>
<div style="left:345px;top:103px;width:4px;height:2px;background:#000;"></div>
<div style="left:331px;top:105px;width:4px;height:2px;background:#000;"></div>
<div style="left:335px;top:105px;width:2px;height:2px;background:#8c8c8c;"></div>
<div style="left:337px;top:105px;width:6px;height:2px;background:#000;"></div>
<div style="left:343px;top:105px;width:2px;height:2px;background:#8c8c8c;"></div>
<div style="left:345px;top:105px;width:4px;height:2px;background:#000;"></div>
<div style="left:331px;top:107px;width:4px;height:2px;background:#000;"></div>
<div style="left:335px;top:107px;width:4px;height:2px;background:#8c8c8c;"></div>
<div style="left:339px;top:107px;width:2px;height:2px;background:#000;"></div>
<div style="left:341px;top:107px;width:4px;height:2px;background:#8c8c8c;"></div>
<div style="left:345px;top:107px;width:4px;height:2px;background:#000;"></div>
<div style="left:333px;top:109px;width:2px;height:2px;background:#000;"></div>
<div style="left:335px;top:109px;width:10px;height:2px;background:#8c8c8c;"></div>
<div style="left:347px;top:109px;width:2px;height:2px;background:#000;"></div>
<div style="left:527px;top:93px;width:6px;height:2px;background:#000;"></div>
<div style="left:523px;top:95px;width:2px;height:2px;background:#000;"></div>
<div style="left:525px;top:95px;width:6px;height:2px;background:#fff;"></div>
<div style="left:531px;top:95px;width:2px;height:2px;background:#000;"></div>
<div style="left:535px;top:95px;width:2px;height:2px;background:#000;"></div>
<div style="left:521px;top:97px;width:2px;height:2px;background:#8c8c8c;"></div>
<div style="left:523px;top:97px;width:2px;height:2px;background:#fff;"></div>
<div style="left:527px;top:97px;width:6px;height:2px;background:#000;"></div>
<div style="left:535px;top:97px;width:2px;height:2px;background:#fff;"></div>
<div style="left:537px;top:97px;width:2px;height:2px;background:#8c8c8c;"></div>
<div style="left:521px;top:99px;width:2px;height:2px;background:#000;"></div>
<div style="left:523px;top:99px;width:2px;height:2px;background:#fff;"></div>
<div style="left:525px;top:99px;width:2px;height:2px;background:#000;"></div>
<div style="left:527px;top:99px;width:6px;height:2px;background:#fff;"></div>
<div style="left:533px;top:99px;width:2px;height:2px;background:#000;"></div>
<div style="left:535px;top:99px;width:2px;height:2px;background:#fff;"></div>
<div style="left:537px;top:99px;width:2px;height:2px;background:#000;"></div>
<div style="left:521px;top:101px;width:2px;height:2px;background:#000;"></div>
<div style="left:523px;top:101px;width:2px;height:2px;background:#fff;"></div>
<div style="left:525px;top:101px;width:2px;height:2px;background:#000;"></div>
<div style="left:527px;top:101px;width:2px;height:2px;background:#fff;"></div>
<div style="left:529px;top:101px;width:6px;height:2px;background:#000;"></div>
<div style="left:535px;top:101px;width:2px;height:2px;background:#fff;"></div>
<div style="left:537px;top:101px;width:2px;height:2px;background:#000;"></div>
<div style="left:521px;top:103px;width:2px;height:2px;background:#000;"></div>
<div style="left:523px;top:103px;width:2px;height:2px;background:#fff;"></div>
<div style="left:525px;top:103px;width:2px;height:2px;background:#000;"></div>
<div style="left:527px;top:103px;width:2px;height:2px;background:#fff;"></div>
<div style="left:529px;top:103px;width:4px;height:2px;background:#000;"></div>
<div style="left:533px;top:103px;width:2px;height:2px;background:#fff;"></div>
<div style="left:535px;top:103px;width:4px;height:2px;background:#000;"></div>
<div style="left:521px;top:105px;width:2px;height:2px;background:#8c8c8c;"></div>
<div style="left:523px;top:105px;width:2px;height:2px;background:#fff;"></div>
<div style="left:525px;top:105px;width:2px;height:2px;background:#8c8c8c;"></div>
<div style="left:527px;top:105px;width:4px;height:2px;background:#000;"></div>
<div style="left:531px;top:105px;width:2px;height:2px;background:#8c8c8c;"></div>
<div style="left:533px;top:105px;width:2px;height:2px;background:#000;"></div>
<div style="left:535px;top:105px;width:2px;height:2px;background:#fff;"></div>
<div style="left:537px;top:105px;width:2px;height:2px;background:#000;"></div>
<div style="left:523px;top:107px;width:2px;height:2px;background:#000;"></div>
<div style="left:525px;top:107px;width:6px;height:2px;background:#fff;"></div>
<div style="left:531px;top:107px;width:2px;height:2px;background:#000;"></div>
<div style="left:533px;top:107px;width:2px;height:2px;background:#8c8c8c;"></div>
<div style="left:535px;top:107px;width:2px;height:2px;background:#000;"></div>
<div style="left:537px;top:107px;width:2px;height:2px;background:#fff;"></div>
<div style="left:539px;top:107px;width:2px;height:2px;background:#000;"></div>
<div style="left:525px;top:109px;width:2px;height:2px;background:#8c8c8c;"></div>
<div style="left:527px;top:109px;width:8px;height:2px;background:#000;"></div>
<div style="left:535px;top:109px;width:2px;height:2px;background:#8c8c8c;"></div>
<div style="left:537px;top:109px;width:4px;height:2px;background:#000;"></div>
<div style="left:535px;top:111px;width:4px;height:2px;background:#000;"></div>
<div style="left:559px;top:95px;width:10px;height:2px;background:#a08270;"></div>
<div style="left:557px;top:97px;width:2px;height:10px;background:#a08270;"></div>
<div style="left:559px;top:107px;width:10px;height:2px;background:#a08270;"></div>
<div style="left:569px;top:99px;width:2px;height:8px;background:#a08270;"></div>
<div style="left:569px;top:95px;width:2px;height:2px;background:#000;"></div>
<div style="left:567px;top:97px;width:2px;height:2px;background:#000;"></div>
<div style="left:569px;top:97px;width:2px;height:2px;background:#fff;"></div>
<div style="left:571px;top:97px;width:2px;height:2px;background:#000;"></div>
<div style="left:559px;top:99px;width:2px;height:2px;background:#000;"></div>
<div style="left:565px;top:99px;width:2px;height:2px;background:#000;"></div>
<div style="left:567px;top:99px;width:2px;height:2px;background:#fff;"></div>
<div style="left:569px;top:99px;width:2px;height:2px;background:#000;"></div>
<div style="left:557px;top:101px;width:2px;height:2px;background:#000;"></div>
<div style="left:559px;top:101px;width:2px;height:2px;background:#fff;"></div>
<div style="left:561px;top:101px;width:4px;height:2px;background:#000;"></div>
<div style="left:565px;top:101px;width:2px;height:2px;background:#fff;"></div>
<div style="left:567px;top:101px;width:2px;height:2px;background:#000;"></div>
<div style="left:559px;top:103px;width:2px;height:2px;background:#000;"></div>
<div style="left:561px;top:103px;width:4px;height:2px;background:#fff;"></div>
<div style="left:565px;top:103px;width:2px;height:2px;background:#000;"></div>
<div style="left:561px;top:105px;width:4px;height:2px;background:#000;"></div>
<div style="left:19px;top:59px;width:2px;height:2px;background:#000;"></div>
<div style="left:17px;top:61px;width:6px;height:2px;background:#000;"></div>
<div style="left:15px;top:63px;width:10px;height:2px;background:#000;"></div>
<div style="left:13px;top:65px;width:14px;height:2px;background:#000;"></div>
<div style="left:15px;top:67px;width:4px;height:2px;background:#000;"></div>
<div style="left:21px;top:67px;width:4px;height:2px;background:#000;"></div>
<div style="left:15px;top:69px;width:4px;height:2px;background:#000;"></div>
<div style="left:21px;top:69px;width:4px;height:2px;background:#000;"></div>
<div style="left:15px;top:71px;width:4px;height:2px;background:#000;"></div>
<div style="left:21px;top:71px;width:4px;height:2px;background:#000;"></div>
<div style="left:15px;top:73px;width:4px;height:2px;background:#a0a0a0;"></div>
<div style="left:21px;top:73px;width:4px;height:2px;background:#a0a0a0;"></div>
<div style="left:143px;top:61px;width:2px;height:2px;background:#000;"></div>
<div style="left:151px;top:61px;width:2px;height:2px;background:#000;"></div>
<div style="left:145px;top:63px;width:2px;height:2px;background:#000;"></div>
<div style="left:149px;top:63px;width:2px;height:2px;background:#000;"></div>
<div style="left:147px;top:65px;width:2px;height:2px;background:#000;"></div>
<div style="left:145px;top:67px;width:2px;height:2px;background:#000;"></div>
<div style="left:149px;top:67px;width:2px;height:2px;background:#000;"></div>
<div style="left:143px;top:69px;width:2px;height:2px;background:#000;"></div>
<div style="left:151px;top:69px;width:2px;height:2px;background:#000;"></div>
<div style="left:903px;top:129px;width:6px;height:2px;background:#000;"></div>
<div style="left:911px;top:129px;width:4px;height:2px;background:#000;"></div>
<div style="left:917px;top:129px;width:6px;height:2px;background:#000;"></div>
<div style="left:903px;top:131px;width:2px;height:2px;background:#000;"></div>
<div style="left:921px;top:131px;width:2px;height:2px;background:#000;"></div>
<div style="left:903px;top:133px;width:2px;height:2px;background:#000;"></div>
<div style="left:921px;top:133px;width:2px;height:2px;background:#000;"></div>
<div style="left:903px;top:137px;width:2px;height:2px;background:#000;"></div>
<div style="left:921px;top:137px;width:2px;height:2px;background:#000;"></div>
<div style="left:903px;top:139px;width:2px;height:2px;background:#000;"></div>
<div style="left:921px;top:139px;width:2px;height:2px;background:#000;"></div>
<div style="left:903px;top:143px;width:2px;height:2px;background:#000;"></div>
<div style="left:921px;top:143px;width:2px;height:2px;background:#000;"></div>
<div style="left:903px;top:145px;width:2px;height:2px;background:#000;"></div>
<div style="left:921px;top:145px;width:2px;height:2px;background:#000;"></div>
<div style="left:903px;top:147px;width:6px;height:2px;background:#000;"></div>
<div style="left:911px;top:147px;width:4px;height:2px;background:#000;"></div>
<div style="left:917px;top:147px;width:6px;height:2px;background:#000;"></div>
<div style="left:915px;top:159px;width:4px;height:2px;background:#000;"></div>
<div style="left:913px;top:161px;width:2px;height:2px;background:#000;"></div>
<div style="left:915px;top:161px;width:4px;height:2px;background:#fff;"></div>
<div style="left:919px;top:161px;width:2px;height:2px;background:#000;"></div>
<div style="left:911px;top:163px;width:2px;height:2px;background:#000;"></div>
<div style="left:913px;top:163px;width:4px;height:2px;background:#fff;"></div>
<div style="left:917px;top:163px;width:2px;height:2px;background:#000;"></div>
<div style="left:919px;top:163px;width:2px;height:2px;background:#8c8c8c;"></div>
<div style="left:921px;top:163px;width:2px;height:2px;background:#000;"></div>
<div style="left:909px;top:165px;width:2px;height:2px;background:#000;"></div>
<div style="left:911px;top:165px;width:4px;height:2px;background:#fff;"></div>
<div style="left:915px;top:165px;width:2px;height:2px;background:#000;"></div>
<div style="left:917px;top:165px;width:2px;height:2px;background:#8c8c8c;"></div>
<div style="left:919px;top:165px;width:4px;height:2px;background:#000;"></div>
<div style="left:907px;top:167px;width:2px;height:2px;background:#000;"></div>
<div style="left:909px;top:167px;width:4px;height:2px;background:#fff;"></div>
<div style="left:913px;top:167px;width:2px;height:2px;background:#000;"></div>
<div style="left:915px;top:167px;width:2px;height:2px;background:#8c8c8c;"></div>
<div style="left:917px;top:167px;width:4px;height:2px;background:#000;"></div>
<div style="left:905px;top:169px;width:2px;height:2px;background:#000;"></div>
<div style="left:907px;top:169px;width:4px;height:2px;background:#fff;"></div>
<div style="left:911px;top:169px;width:2px;height:2px;background:#000;"></div>
<div style="left:913px;top:169px;width:2px;height:2px;background:#8c8c8c;"></div>
<div style="left:915px;top:169px;width:4px;height:2px;background:#000;"></div>
<div style="left:903px;top:171px;width:2px;height:2px;background:#000;"></div>
<div style="left:905px;top:171px;width:2px;height:2px;background:#d8d8d8;"></div>
<div style="left:907px;top:171px;width:2px;height:2px;background:#fff;"></div>
<div style="left:909px;top:171px;width:2px;height:2px;background:#000;"></div>
<div style="left:911px;top:171px;width:2px;height:2px;background:#8c8c8c;"></div>
<div style="left:913px;top:171px;width:4px;height:2px;background:#000;"></div>
<div style="left:903px;top:173px;width:2px;height:2px;background:#000;"></div>
<div style="left:905px;top:173px;width:2px;height:2px;background:#fff;"></div>
<div style="left:907px;top:173px;width:4px;height:2px;background:#d8d8d8;"></div>
<div style="left:911px;top:173px;width:4px;height:2px;background:#000;"></div>
<div style="left:903px;top:175px;width:4px;height:2px;background:#000;"></div>
<div style="left:907px;top:175px;width:4px;height:2px;background:#8c8c8c;"></div>
<div style="left:911px;top:175px;width:2px;height:2px;background:#000;"></div>
<div style="left:903px;top:177px;width:8px;height:2px;background:#000;"></div>
<div style="left:911px;top:191px;width:10px;height:2px;background:#000;"></div>
<div style="left:909px;top:193px;width:2px;height:2px;background:#000;"></div>
<div style="left:911px;top:193px;width:10px;height:2px;background:#fff;"></div>
<div style="left:921px;top:193px;width:2px;height:2px;background:#000;"></div>
<div style="left:907px;top:195px;width:2px;height:2px;background:#000;"></div>
<div style="left:909px;top:195px;width:8px;height:2px;background:#fff;"></div>
<div style="left:917px;top:195px;width:4px;height:2px;background:#d8d8d8;"></div>
<div style="left:921px;top:195px;width:2px;height:2px;background:#000;"></div>
<div style="left:905px;top:197px;width:2px;height:2px;background:#000;"></div>
<div style="left:907px;top:197px;width:8px;height:2px;background:#fff;"></div>
<div style="left:915px;top:197px;width:6px;height:2px;background:#8c8c8c;"></div>
<div style="left:921px;top:197px;width:2px;height:2px;background:#000;"></div>
<div style="left:903px;top:199px;width:2px;height:2px;background:#000;"></div>
<div style="left:905px;top:199px;width:8px;height:2px;background:#fff;"></div>
<div style="left:913px;top:199px;width:6px;height:2px;background:#8c8c8c;"></div>
<div style="left:919px;top:199px;width:2px;height:2px;background:#000;"></div>
<div style="left:903px;top:201px;width:2px;height:2px;background:#000;"></div>
<div style="left:905px;top:201px;width:10px;height:2px;background:#d8d8d8;"></div>
<div style="left:915px;top:201px;width:2px;height:2px;background:#8c8c8c;"></div>
<div style="left:917px;top:201px;width:2px;height:2px;background:#000;"></div>
<div style="left:903px;top:203px;width:2px;height:2px;background:#000;"></div>
<div style="left:905px;top:203px;width:10px;height:2px;background:#d8d8d8;"></div>
<div style="left:915px;top:203px;width:2px;height:2px;background:#000;"></div>
<div style="left:905px;top:205px;width:10px;height:2px;background:#000;"></div>
<div style="left:919px;top:217px;width:4px;height:2px;background:#000;"></div>
<div style="left:917px;top:219px;width:2px;height:2px;background:#000;"></div>
<div style="left:919px;top:219px;width:2px;height:2px;background:#fff;"></div>
<div style="left:921px;top:219px;width:2px;height:2px;background:#000;"></div>
<div style="left:911px;top:221px;width:2px;height:2px;background:#000;"></div>
<div style="left:913px;top:221px;width:2px;height:2px;background:#8c8c8c;"></div>
<div style="left:915px;top:221px;width:2px;height:2px;background:#000;"></div>
<div style="left:917px;top:221px;width:2px;height:2px;background:#8c8c8c;"></div>
<div style="left:919px;top:221px;width:4px;height:2px;background:#000;"></div>
<div style="left:911px;top:223px;width:2px;height:2px;background:#fff;"></div>
<div style="left:913px;top:223px;width:2px;height:2px;background:#000;"></div>
<div style="left:915px;top:223px;width:2px;height:2px;background:#fff;"></div>
<div style="left:917px;top:223px;width:6px;height:2px;background:#000;"></div>
<div style="left:911px;top:225px;width:2px;height:2px;background:#000;"></div>
<div style="left:913px;top:225px;width:2px;height:2px;background:#fff;"></div>
<div style="left:915px;top:225px;width:6px;height:2px;background:#000;"></div>
<div style="left:909px;top:227px;width:2px;height:2px;background:#000;"></div>
<div style="left:911px;top:227px;width:2px;height:2px;background:#fff;"></div>
<div style="left:913px;top:227px;width:2px;height:2px;background:#8c8c8c;"></div>
<div style="left:915px;top:227px;width:2px;height:2px;background:#fff;"></div>
<div style="left:917px;top:227px;width:2px;height:2px;background:#000;"></div>
<div style="left:919px;top:227px;width:2px;height:2px;background:#8c8c8c;"></div>
<div style="left:907px;top:229px;width:2px;height:2px;background:#000;"></div>
<div style="left:909px;top:229px;width:2px;height:2px;background:#fff;"></div>
<div style="left:911px;top:229px;width:2px;height:2px;background:#8c8c8c;"></div>
<div style="left:913px;top:229px;width:2px;height:2px;background:#fff;"></div>
<div style="left:915px;top:229px;width:2px;height:2px;background:#000;"></div>
<div style="left:917px;top:229px;width:2px;height:2px;background:#8c8c8c;"></div>
<div style="left:919px;top:229px;width:2px;height:2px;background:#000;"></div>
<div style="left:905px;top:231px;width:2px;height:2px;background:#000;"></div>
<div style="left:907px;top:231px;width:2px;height:2px;background:#fff;"></div>
<div style="left:909px;top:231px;width:2px;height:2px;background:#8c8c8c;"></div>
<div style="left:911px;top:231px;width:2px;height:2px;background:#fff;"></div>
<div style="left:913px;top:231px;width:2px;height:2px;background:#000;"></div>
<div style="left:915px;top:231px;width:2px;height:2px;background:#8c8c8c;"></div>
<div style="left:905px;top:233px;width:2px;height:2px;background:#000;"></div>
<div style="left:907px;top:233px;width:2px;height:2px;background:#8c8c8c;"></div>
<div style="left:909px;top:233px;width:2px;height:2px;background:#fff;"></div>
<div style="left:911px;top:233px;width:2px;height:2px;background:#000;"></div>
<div style="left:913px;top:233px;width:2px;height:2px;background:#8c8c8c;"></div>
<div style="left:903px;top:235px;width:2px;height:2px;background:#000;"></div>
<div style="left:905px;top:235px;width:2px;height:2px;background:#fff;"></div>
<div style="left:907px;top:235px;width:4px;height:2px;background:#000;"></div>
<div style="left:911px;top:235px;width:2px;height:2px;background:#8c8c8c;"></div>
<div style="left:903px;top:237px;width:4px;height:2px;background:#000;"></div>
<div style="left:907px;top:237px;width:2px;height:2px;background:#8c8c8c;"></div>
<div style="left:905px;top:249px;width:2px;height:2px;background:#8c8c8c;"></div>
<div style="left:907px;top:249px;width:8px;height:2px;background:#000;"></div>
<div style="left:915px;top:249px;width:2px;height:2px;background:#8c8c8c;"></div>
<div style="left:903px;top:251px;width:4px;height:2px;background:#8c8c8c;"></div>
<div style="left:907px;top:251px;width:8px;height:2px;background:#fff;"></div>
<div style="left:915px;top:251px;width:4px;height:2px;background:#8c8c8c;"></div>
<div style="left:903px;top:253px;width:2px;height:2px;background:#000;"></div>
<div style="left:905px;top:253px;width:6px;height:2px;background:#fff;"></div>
<div style="left:911px;top:253px;width:2px;height:2px;background:#8c8c8c;"></div>
<div style="left:913px;top:253px;width:2px;height:2px;background:#fff;"></div>
<div style="left:915px;top:253px;width:2px;height:2px;background:#d8d8d8;"></div>
<div style="left:917px;top:253px;width:2px;height:2px;background:#000;"></div>
<div style="left:903px;top:255px;width:2px;height:2px;background:#000;"></div>
<div style="left:905px;top:255px;width:8px;height:2px;background:#fff;"></div>
<div style="left:913px;top:255px;width:2px;height:2px;background:#8c8c8c;"></div>
<div style="left:915px;top:255px;width:2px;height:2px;background:#fff;"></div>
<div style="left:917px;top:255px;width:2px;height:2px;background:#000;"></div>
<div style="left:903px;top:257px;width:2px;height:2px;background:#000;"></div>
<div style="left:905px;top:257px;width:2px;height:2px;background:#fff;"></div>
<div style="left:907px;top:257px;width:2px;height:2px;background:#8c8c8c;"></div>
<div style="left:909px;top:257px;width:2px;height:2px;background:#d8d8d8;"></div>
<div style="left:911px;top:257px;width:2px;height:2px;background:#8c8c8c;"></div>
<div style="left:913px;top:257px;width:4px;height:2px;background:#fff;"></div>
<div style="left:917px;top:257px;width:2px;height:2px;background:#000;"></div>
<div style="left:903px;top:259px;width:2px;height:2px;background:#000;"></div>
<div style="left:905px;top:259px;width:2px;height:2px;background:#fff;"></div>
<div style="left:907px;top:259px;width:2px;height:2px;background:#d8d8d8;"></div>
<div style="left:909px;top:259px;width:4px;height:2px;background:#8c8c8c;"></div>
<div style="left:913px;top:259px;width:4px;height:2px;background:#fff;"></div>
<div style="left:917px;top:259px;width:2px;height:2px;background:#000;"></div>
<div style="left:903px;top:261px;width:4px;height:2px;background:#8c8c8c;"></div>
<div style="left:907px;top:261px;width:8px;height:2px;background:#fff;"></div>
<div style="left:915px;top:261px;width:2px;height:2px;background:#8c8c8c;"></div>
<div style="left:917px;top:261px;width:4px;height:2px;background:#000;"></div>
<div style="left:905px;top:263px;width:2px;height:2px;background:#8c8c8c;"></div>
<div style="left:907px;top:263px;width:12px;height:2px;background:#000;"></div>
<div style="left:919px;top:263px;width:2px;height:2px;background:#fff;"></div>
<div style="left:921px;top:263px;width:2px;height:2px;background:#000;"></div>
<div style="left:915px;top:265px;width:6px;height:2px;background:#000;"></div>
<div style="left:921px;top:265px;width:2px;height:2px;background:#fff;"></div>
<div style="left:923px;top:265px;width:2px;height:2px;background:#000;"></div>
<div style="left:917px;top:267px;width:8px;height:2px;background:#000;"></div>
<div style="left:919px;top:269px;width:4px;height:2px;background:#000;"></div>
<div style="left:911px;top:275px;width:2px;height:2px;background:#000;"></div>
<div style="left:909px;top:277px;width:6px;height:2px;background:#000;"></div>
<div style="left:911px;top:279px;width:2px;height:2px;background:#000;"></div>
<div style="left:911px;top:281px;width:2px;height:2px;background:#000;"></div>
<div style="left:903px;top:283px;width:2px;height:2px;background:#000;"></div>
<div style="left:911px;top:283px;width:2px;height:2px;background:#000;"></div>
<div style="left:919px;top:283px;width:2px;height:2px;background:#000;"></div>
<div style="left:901px;top:285px;width:4px;height:2px;background:#000;"></div>
<div style="left:911px;top:285px;width:2px;height:2px;background:#000;"></div>
<div style="left:919px;top:285px;width:4px;height:2px;background:#000;"></div>
<div style="left:901px;top:287px;width:22px;height:2px;background:#000;"></div>
<div style="left:903px;top:289px;width:2px;height:2px;background:#000;"></div>
<div style="left:911px;top:289px;width:2px;height:2px;background:#000;"></div>
<div style="left:919px;top:289px;width:2px;height:2px;background:#000;"></div>
<div style="left:911px;top:291px;width:2px;height:2px;background:#000;"></div>
<div style="left:911px;top:293px;width:2px;height:2px;background:#000;"></div>
<div style="left:909px;top:295px;width:6px;height:2px;background:#000;"></div>
<div style="left:911px;top:297px;width:2px;height:2px;background:#000;"></div>
<div style="left:911px;top:307px;width:4px;height:2px;background:#000;"></div>
<div style="left:909px;top:309px;width:2px;height:2px;background:#8c8c8c;"></div>
<div style="left:911px;top:309px;width:4px;height:2px;background:#000;"></div>
<div style="left:915px;top:309px;width:2px;height:2px;background:#8c8c8c;"></div>
<div style="left:909px;top:311px;width:8px;height:2px;background:#000;"></div>
<div style="left:907px;top:313px;width:2px;height:2px;background:#8c8c8c;"></div>
<div style="left:909px;top:313px;width:8px;height:2px;background:#000;"></div>
<div style="left:917px;top:313px;width:2px;height:2px;background:#8c8c8c;"></div>
<div style="left:907px;top:315px;width:12px;height:2px;background:#000;"></div>
<div style="left:907px;top:317px;width:2px;height:2px;background:#000;"></div>
<div style="left:909px;top:317px;width:2px;height:2px;background:#fff;"></div>
<div style="left:911px;top:317px;width:8px;height:2px;background:#000;"></div>
<div style="left:907px;top:319px;width:8px;height:2px;background:#000;"></div>
<div style="left:915px;top:319px;width:2px;height:2px;background:#8c8c8c;"></div>
<div style="left:917px;top:319px;width:2px;height:2px;background:#000;"></div>
<div style="left:907px;top:321px;width:6px;height:2px;background:#000;"></div>
<div style="left:913px;top:321px;width:2px;height:2px;background:#8c8c8c;"></div>
<div style="left:915px;top:321px;width:4px;height:2px;background:#000;"></div>
<div style="left:909px;top:323px;width:8px;height:2px;background:#000;"></div>
<div style="left:909px;top:327px;width:8px;height:2px;background:#8c8c8c;"></div>
<div style="left:921px;top:339px;width:2px;height:2px;background:#000;"></div>
<div style="left:919px;top:341px;width:2px;height:2px;background:#000;"></div>
<div style="left:917px;top:343px;width:2px;height:2px;background:#000;"></div>
<div style="left:915px;top:345px;width:2px;height:2px;background:#000;"></div>
<div style="left:913px;top:347px;width:2px;height:2px;background:#000;"></div>
<div style="left:911px;top:349px;width:2px;height:2px;background:#000;"></div>
<div style="left:909px;top:351px;width:2px;height:2px;background:#000;"></div>
<div style="left:907px;top:353px;width:2px;height:2px;background:#000;"></div>
<div style="left:905px;top:355px;width:2px;height:2px;background:#000;"></div>
<div style="left:903px;top:357px;width:2px;height:2px;background:#000;"></div>
<div style="left:905px;top:371px;width:16px;height:2px;background:#000;"></div>
<div style="left:903px;top:373px;width:2px;height:2px;background:#000;"></div>
<div style="left:921px;top:373px;width:2px;height:2px;background:#000;"></div>
<div style="left:903px;top:375px;width:2px;height:2px;background:#000;"></div>
<div style="left:921px;top:375px;width:2px;height:2px;background:#000;"></div>
<div style="left:903px;top:377px;width:2px;height:2px;background:#000;"></div>
<div style="left:921px;top:377px;width:2px;height:2px;background:#000;"></div>
<div style="left:903px;top:379px;width:2px;height:2px;background:#000;"></div>
<div style="left:921px;top:379px;width:2px;height:2px;background:#000;"></div>
<div style="left:903px;top:381px;width:2px;height:2px;background:#000;"></div>
<div style="left:921px;top:381px;width:2px;height:2px;background:#000;"></div>
<div style="left:903px;top:383px;width:2px;height:2px;background:#000;"></div>
<div style="left:921px;top:383px;width:2px;height:2px;background:#000;"></div>
<div style="left:905px;top:385px;width:16px;height:2px;background:#000;"></div>
<div style="left:913px;top:399px;width:4px;height:2px;background:#000;"></div>
<div style="left:915px;top:401px;width:6px;height:2px;background:#000;"></div>
<div style="left:915px;top:403px;width:6px;height:2px;background:#000;"></div>
<div style="left:911px;top:405px;width:12px;height:2px;background:#000;"></div>
<div style="left:905px;top:407px;width:18px;height:2px;background:#000;"></div>
<div style="left:903px;top:409px;width:20px;height:2px;background:#000;"></div>
<div style="left:901px;top:411px;width:20px;height:2px;background:#000;"></div>
<div style="left:901px;top:413px;width:20px;height:2px;background:#000;"></div>
<div style="left:903px;top:415px;width:14px;height:2px;background:#000;"></div>
<div style="left:905px;top:417px;width:8px;height:2px;background:#000;"></div>
<div style="left:917px;top:427px;width:2px;height:2px;background:#8c8c8c;"></div>
<div style="left:921px;top:427px;width:2px;height:2px;background:#8c8c8c;"></div>
<div style="left:913px;top:431px;width:2px;height:2px;background:#8c8c8c;"></div>
<div style="left:917px;top:431px;width:2px;height:2px;background:#8c8c8c;"></div>
<div style="left:921px;top:431px;width:2px;height:2px;background:#8c8c8c;"></div>
<div style="left:911px;top:433px;width:2px;height:2px;background:#8c8c8c;"></div>
<div style="left:913px;top:433px;width:2px;height:2px;background:#fff;"></div>
<div style="left:915px;top:433px;width:2px;height:2px;background:#8c8c8c;"></div>
<div style="left:909px;top:435px;width:6px;height:2px;background:#8c8c8c;"></div>
<div style="left:915px;top:435px;width:2px;height:2px;background:#fff;"></div>
<div style="left:917px;top:435px;width:2px;height:2px;background:#8c8c8c;"></div>
<div style="left:907px;top:437px;width:2px;height:2px;background:#8c8c8c;"></div>
<div style="left:909px;top:437px;width:2px;height:2px;background:#000;"></div>
<div style="left:911px;top:437px;width:6px;height:2px;background:#8c8c8c;"></div>
<div style="left:905px;top:439px;width:4px;height:2px;background:#000;"></div>
<div style="left:909px;top:439px;width:2px;height:2px;background:#d8d8d8;"></div>
<div style="left:911px;top:439px;width:2px;height:2px;background:#000;"></div>
<div style="left:913px;top:439px;width:2px;height:2px;background:#8c8c8c;"></div>
<div style="left:903px;top:441px;width:8px;height:2px;background:#000;"></div>
<div style="left:911px;top:441px;width:2px;height:2px;background:#8c8c8c;"></div>
<div style="left:903px;top:443px;width:8px;height:2px;background:#000;"></div>
<div style="left:903px;top:445px;width:2px;height:2px;background:#8c8c8c;"></div>
<div style="left:905px;top:445px;width:4px;height:2px;background:#000;"></div>
<div style="left:903px;top:461px;width:18px;height:2px;background:#000;"></div>
<div style="left:903px;top:463px;width:18px;height:2px;background:#000;"></div>
<div style="left:903px;top:465px;width:2px;height:2px;background:#000;"></div>
<div style="left:909px;top:465px;width:6px;height:2px;background:#000;"></div>
<div style="left:919px;top:465px;width:2px;height:2px;background:#000;"></div>
<div style="left:909px;top:467px;width:6px;height:2px;background:#000;"></div>
<div style="left:909px;top:469px;width:6px;height:2px;background:#000;"></div>
<div style="left:909px;top:471px;width:6px;height:2px;background:#000;"></div>
<div style="left:909px;top:473px;width:6px;height:2px;background:#000;"></div>
<div style="left:909px;top:475px;width:6px;height:2px;background:#000;"></div>
<div style="left:907px;top:477px;width:10px;height:2px;background:#000;"></div>
<div style="left:903px;top:627px;width:20px;height:2px;background:#000;"></div>
<div style="left:903px;top:647px;width:20px;height:2px;background:#000;"></div>
<div style="left:901px;top:629px;width:2px;height:18px;background:#000;"></div>
<div style="left:923px;top:629px;width:2px;height:18px;background:#000;"></div>
<div style="left:903px;top:629px;width:20px;height:18px;background:#c6c6c6;"></div>
<div style="left:907px;top:633px;width:2px;height:2px;background:#000;"></div>
<div style="left:917px;top:633px;width:2px;height:2px;background:#000;"></div>
<div style="left:905px;top:635px;width:4px;height:2px;background:#000;"></div>
<div style="left:911px;top:635px;width:2px;height:2px;background:#000;"></div>
<div style="left:915px;top:635px;width:4px;height:2px;background:#000;"></div>
<div style="left:907px;top:637px;width:2px;height:2px;background:#000;"></div>
<div style="left:917px;top:637px;width:2px;height:2px;background:#000;"></div>
<div style="left:907px;top:639px;width:2px;height:2px;background:#000;"></div>
<div style="left:911px;top:639px;width:2px;height:2px;background:#000;"></div>
<div style="left:917px;top:639px;width:2px;height:2px;background:#000;"></div>
<div style="left:907px;top:641px;width:2px;height:2px;background:#000;"></div>
<div style="left:917px;top:641px;width:2px;height:2px;background:#000;"></div>
<div style="left:905px;top:661px;width:16px;height:16px;background:#000;"></div>
<div style="left:907px;top:663px;width:2px;height:2px;background:#fff;"></div>
<div style="left:917px;top:663px;width:2px;height:2px;background:#fff;"></div>
<div style="left:907px;top:667px;width:2px;height:2px;background:#fff;"></div>
<div style="left:917px;top:667px;width:2px;height:2px;background:#fff;"></div>
<div style="left:907px;top:671px;width:2px;height:2px;background:#fff;"></div>
<div style="left:917px;top:671px;width:2px;height:2px;background:#fff;"></div>
<div style="left:907px;top:675px;width:2px;height:2px;background:#fff;"></div>
<div style="left:917px;top:675px;width:2px;height:2px;background:#fff;"></div>
<div style="left:229px;top:639px;width:8px;height:2px;background:#000;"></div>
<div style="left:227px;top:641px;width:6px;height:2px;background:#000;"></div>
<div style="left:233px;top:641px;width:2px;height:2px;background:#fff;"></div>
<div style="left:235px;top:641px;width:4px;height:2px;background:#000;"></div>
<div style="left:225px;top:643px;width:2px;height:2px;background:#000;"></div>
<div style="left:229px;top:643px;width:8px;height:2px;background:#000;"></div>
<div style="left:239px;top:643px;width:2px;height:2px;background:#000;"></div>
<div style="left:225px;top:645px;width:2px;height:2px;background:#000;"></div>
<div style="left:231px;top:645px;width:4px;height:2px;background:#000;"></div>
<div style="left:239px;top:645px;width:2px;height:2px;background:#000;"></div>
<div style="left:227px;top:647px;width:2px;height:2px;background:#000;"></div>
<div style="left:237px;top:647px;width:2px;height:2px;background:#000;"></div>
<div style="left:229px;top:649px;width:8px;height:2px;background:#000;"></div>
<div style="left:255px;top:635px;width:4px;height:2px;background:#000;"></div>
<div style="left:253px;top:637px;width:2px;height:2px;background:#000;"></div>
<div style="left:259px;top:637px;width:2px;height:2px;background:#000;"></div>
<div style="left:253px;top:639px;width:2px;height:2px;background:#000;"></div>
<div style="left:251px;top:641px;width:12px;height:2px;background:#000;"></div>
<div style="left:251px;top:643px;width:12px;height:2px;background:#000;"></div>
<div style="left:251px;top:645px;width:6px;height:2px;background:#000;"></div>
<div style="left:257px;top:645px;width:2px;height:2px;background:#8c8c8c;"></div>
<div style="left:259px;top:645px;width:4px;height:2px;background:#000;"></div>
<div style="left:251px;top:647px;width:6px;height:2px;background:#000;"></div>
<div style="left:257px;top:647px;width:2px;height:2px;background:#8c8c8c;"></div>
<div style="left:259px;top:647px;width:4px;height:2px;background:#000;"></div>
<div style="left:251px;top:649px;width:12px;height:2px;background:#a0a0a0;"></div>
<div style="left:275px;top:639px;width:4px;height:2px;background:#000;"></div>
<div style="left:285px;top:639px;width:4px;height:2px;background:#000;"></div>
<div style="left:273px;top:641px;width:8px;height:2px;background:#000;"></div>
<div style="left:283px;top:641px;width:8px;height:2px;background:#000;"></div>
<div style="left:273px;top:643px;width:8px;height:2px;background:#000;"></div>
<div style="left:283px;top:643px;width:8px;height:2px;background:#000;"></div>
<div style="left:275px;top:645px;width:4px;height:2px;background:#000;"></div>
<div style="left:285px;top:645px;width:4px;height:2px;background:#000;"></div>
<div style="left:275px;top:647px;width:4px;height:2px;background:#8c8c8c;"></div>
<div style="left:285px;top:647px;width:4px;height:2px;background:#8c8c8c;"></div>
<div style="left:299px;top:637px;width:14px;height:2px;background:#808080;"></div>
<div style="left:299px;top:643px;width:14px;height:2px;background:#808080;"></div>
<div style="left:299px;top:649px;width:14px;height:2px;background:#808080;"></div>
<div style="left:307px;top:635px;width:4px;height:6px;background:#000;"></div>
<div style="left:301px;top:641px;width:4px;height:6px;background:#000;"></div>
<div style="left:305px;top:647px;width:4px;height:6px;background:#000;"></div>
<div style="left:327px;top:641px;width:10px;height:10px;background:transparent;box-sizing:border-box;border:2px solid #808080;"></div>
<div style="left:323px;top:637px;width:10px;height:10px;background:#c6c6c6;box-sizing:border-box;border:2px solid #000;"></div>
<div style="left:229px;top:663px;width:8px;height:2px;background:#fff;"></div>
<div style="left:227px;top:665px;width:6px;height:2px;background:#fff;"></div>
<div style="left:233px;top:665px;width:2px;height:2px;background:#7d929e;"></div>
<div style="left:235px;top:665px;width:4px;height:2px;background:#fff;"></div>
<div style="left:225px;top:667px;width:2px;height:2px;background:#fff;"></div>
<div style="left:229px;top:667px;width:8px;height:2px;background:#fff;"></div>
<div style="left:239px;top:667px;width:2px;height:2px;background:#fff;"></div>
<div style="left:225px;top:669px;width:2px;height:2px;background:#fff;"></div>
<div style="left:231px;top:669px;width:4px;height:2px;background:#fff;"></div>
<div style="left:239px;top:669px;width:2px;height:2px;background:#fff;"></div>
<div style="left:227px;top:671px;width:2px;height:2px;background:#fff;"></div>
<div style="left:237px;top:671px;width:2px;height:2px;background:#fff;"></div>
<div style="left:229px;top:673px;width:8px;height:2px;background:#fff;"></div>
<div style="left:255px;top:659px;width:4px;height:2px;background:#fff;"></div>
<div style="left:253px;top:661px;width:2px;height:2px;background:#fff;"></div>
<div style="left:259px;top:661px;width:2px;height:2px;background:#fff;"></div>
<div style="left:253px;top:663px;width:2px;height:2px;background:#fff;"></div>
<div style="left:251px;top:665px;width:12px;height:2px;background:#fff;"></div>
<div style="left:251px;top:667px;width:12px;height:2px;background:#fff;"></div>
<div style="left:251px;top:669px;width:6px;height:2px;background:#fff;"></div>
<div style="left:257px;top:669px;width:2px;height:2px;background:#4a5860;"></div>
<div style="left:259px;top:669px;width:4px;height:2px;background:#fff;"></div>
<div style="left:251px;top:671px;width:6px;height:2px;background:#fff;"></div>
<div style="left:257px;top:671px;width:2px;height:2px;background:#4a5860;"></div>
<div style="left:259px;top:671px;width:4px;height:2px;background:#fff;"></div>
<div style="left:251px;top:673px;width:12px;height:2px;background:#4a5860;"></div>
<div style="left:275px;top:663px;width:4px;height:2px;background:#fff;"></div>
<div style="left:285px;top:663px;width:4px;height:2px;background:#fff;"></div>
<div style="left:273px;top:665px;width:8px;height:2px;background:#fff;"></div>
<div style="left:283px;top:665px;width:8px;height:2px;background:#fff;"></div>
<div style="left:273px;top:667px;width:8px;height:2px;background:#fff;"></div>
<div style="left:283px;top:667px;width:8px;height:2px;background:#fff;"></div>
<div style="left:275px;top:669px;width:4px;height:2px;background:#fff;"></div>
<div style="left:285px;top:669px;width:4px;height:2px;background:#fff;"></div>
<div style="left:275px;top:671px;width:4px;height:2px;background:#4a5860;"></div>
<div style="left:285px;top:671px;width:4px;height:2px;background:#4a5860;"></div>
<div style="left:233px;top:607px;width:2px;height:2px;background:#000;"></div>
<div style="left:241px;top:607px;width:2px;height:2px;background:#000;"></div>
<div style="left:233px;top:609px;width:2px;height:2px;background:#000;"></div>
<div style="left:239px;top:609px;width:4px;height:2px;background:#000;"></div>
<div style="left:233px;top:611px;width:2px;height:2px;background:#000;"></div>
<div style="left:237px;top:611px;width:6px;height:2px;background:#000;"></div>
<div style="left:233px;top:613px;width:2px;height:2px;background:#000;"></div>
<div style="left:239px;top:613px;width:4px;height:2px;background:#000;"></div>
<div style="left:233px;top:615px;width:2px;height:2px;background:#000;"></div>
<div style="left:241px;top:615px;width:2px;height:2px;background:#000;"></div>
<div style="left:269px;top:607px;width:2px;height:2px;background:#000;"></div>
<div style="left:273px;top:607px;width:2px;height:2px;background:#000;"></div>
<div style="left:267px;top:609px;width:4px;height:2px;background:#000;"></div>
<div style="left:273px;top:609px;width:2px;height:2px;background:#000;"></div>
<div style="left:265px;top:611px;width:6px;height:2px;background:#000;"></div>
<div style="left:273px;top:611px;width:2px;height:2px;background:#000;"></div>
<div style="left:267px;top:613px;width:4px;height:2px;background:#000;"></div>
<div style="left:273px;top:613px;width:2px;height:2px;background:#000;"></div>
<div style="left:269px;top:615px;width:2px;height:2px;background:#000;"></div>
<div style="left:273px;top:615px;width:2px;height:2px;background:#000;"></div>
<div style="left:299px;top:607px;width:2px;height:2px;background:#000;"></div>
<div style="left:299px;top:609px;width:4px;height:2px;background:#000;"></div>
<div style="left:299px;top:611px;width:6px;height:2px;background:#000;"></div>
<div style="left:299px;top:613px;width:4px;height:2px;background:#000;"></div>
<div style="left:299px;top:615px;width:2px;height:2px;background:#000;"></div>
<div style="left:329px;top:607px;width:2px;height:2px;background:#000;"></div>
<div style="left:333px;top:607px;width:2px;height:2px;background:#000;"></div>
<div style="left:329px;top:609px;width:2px;height:2px;background:#000;"></div>
<div style="left:333px;top:609px;width:4px;height:2px;background:#000;"></div>
<div style="left:329px;top:611px;width:2px;height:2px;background:#000;"></div>
<div style="left:333px;top:611px;width:6px;height:2px;background:#000;"></div>
<div style="left:329px;top:613px;width:2px;height:2px;background:#000;"></div>
<div style="left:333px;top:613px;width:4px;height:2px;background:#000;"></div>
<div style="left:329px;top:615px;width:2px;height:2px;background:#000;"></div>
<div style="left:333px;top:615px;width:2px;height:2px;background:#000;"></div>
<div style="left:361px;top:607px;width:2px;height:2px;background:#000;"></div>
<div style="left:369px;top:607px;width:2px;height:2px;background:#000;"></div>
<div style="left:361px;top:609px;width:4px;height:2px;background:#000;"></div>
<div style="left:369px;top:609px;width:2px;height:2px;background:#000;"></div>
<div style="left:361px;top:611px;width:6px;height:2px;background:#000;"></div>
<div style="left:369px;top:611px;width:2px;height:2px;background:#000;"></div>
<div style="left:361px;top:613px;width:4px;height:2px;background:#000;"></div>
<div style="left:369px;top:613px;width:2px;height:2px;background:#000;"></div>
<div style="left:361px;top:615px;width:2px;height:2px;background:#000;"></div>
<div style="left:369px;top:615px;width:2px;height:2px;background:#000;"></div>
<div style="left:11px;top:525px;width:4px;height:4px;background:transparent;box-sizing:border-box;border:1px solid #555;"></div>
<div style="left:11px;top:583px;width:4px;height:7px;background:transparent;box-sizing:border-box;border:1px solid #333;"></div>
<div style="left:205px;top:599px;width:4px;height:8px;background:transparent;box-sizing:border-box;border:1px solid #333;"></div>
</div></body></html>
